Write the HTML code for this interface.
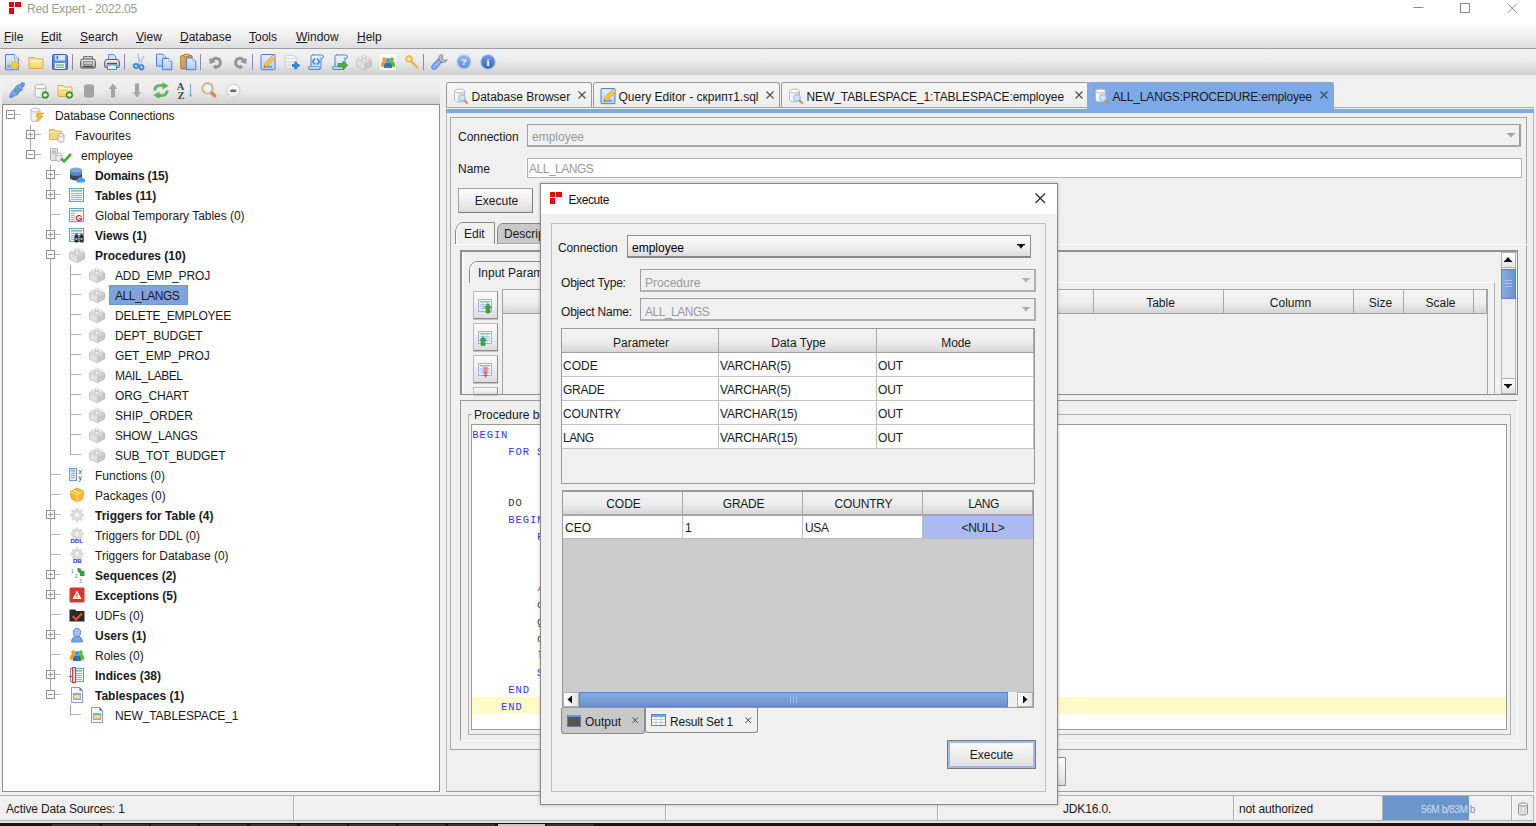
<!DOCTYPE html>
<html><head><meta charset="utf-8"><title>Red Expert - 2022.05</title>
<style>
*{box-sizing:border-box;margin:0;padding:0}
html,body{width:1536px;height:826px;overflow:hidden}
body{position:relative;background:#f0f0f0;font-family:"Liberation Sans",sans-serif;font-size:12px;color:#1a1a1a}
.abs{position:absolute}
.t{position:absolute;white-space:nowrap;line-height:14px;height:14px}
.b{font-weight:bold}
.g{color:#9a9a9a}
u{text-decoration:underline;text-underline-offset:1px}
.hdr{position:absolute;overflow:hidden;background:linear-gradient(#f3f3f3,#eeeeee 55%,#d6d6d6);border-right:1px solid #a8a8a8;border-bottom:1px solid #a0a0a0;text-align:center;line-height:21px;white-space:nowrap}
.cell{position:absolute;background:#fff;border-right:1px solid #c8c8c8;border-bottom:1px solid #c8c8c8;line-height:23px;padding-left:2px;white-space:nowrap}
.btn{position:absolute;border:1px solid #8e8e8e;background:linear-gradient(#fcfcfc,#ededed 55%,#dcdcdc);text-align:center;white-space:nowrap}
.mono{font-family:"Liberation Mono",monospace;font-size:10.5px;letter-spacing:0.9px;color:#2b2be8;position:absolute;white-space:pre;line-height:14px}
</style></head><body>

<div class="abs" style="left:0;top:0;width:1536px;height:23px;background:#fff"></div>
<svg class="abs" style="left:9px;top:2px" width="12" height="12"><rect x="0" y="0" width="5" height="5" fill="#e8000a"/><rect x="6" y="0" width="6" height="5" fill="#e8000a"/><rect x="0" y="6" width="5" height="6" fill="#e8000a"/></svg>
<div class="t" style="left:27px;top:2px;color:#9b9b9b;font-size:12px;letter-spacing:-0.2px">Red Expert - 2022.05</div>
<svg class="abs" style="left:1405px;top:0" width="131" height="20" fill="none" stroke="#8c8c8c" stroke-width="1">
<path d="M8.5 7.5H18.5"/><rect x="55.500" y="3.500" width="9" height="9"/><path d="M102.500 3.500L112 13M112 3.500L102.500 13"/></svg>
<div class="abs" style="left:0;top:23px;width:1536px;height:26px;background:linear-gradient(#ffffff,#f2f2f2 40%,#dedede);border-bottom:1px solid #9c9c9c"></div>
<div class="t" style="left:4px;top:30px"><u>F</u>ile</div>
<div class="t" style="left:41px;top:30px"><u>E</u>dit</div>
<div class="t" style="left:80px;top:30px"><u>S</u>earch</div>
<div class="t" style="left:136px;top:30px"><u>V</u>iew</div>
<div class="t" style="left:180px;top:30px"><u>D</u>atabase</div>
<div class="t" style="left:249px;top:30px"><u>T</u>ools</div>
<div class="t" style="left:296px;top:30px"><u>W</u>indow</div>
<div class="t" style="left:357px;top:30px"><u>H</u>elp</div>
<div class="abs" style="left:0;top:49px;width:1536px;height:26px;background:linear-gradient(#f2f2f2,#ebebeb 50%,#cecece)"></div>
<svg class="abs" style="left:4px;top:54px;overflow:visible" width="16" height="16" viewBox="0 0 16 16"><linearGradient id="gnew" x1="0" y1="0" x2="0" y2="1"><stop offset="0" stop-color="#e6f0fd"/><stop offset="1" stop-color="#a9c8f4"/></linearGradient><path d="M1.5 0.5H10.5L14.5 4.5V15.7H1.5Z" fill="url(#gnew)" stroke="#4a80d8" stroke-width="1"/><path d="M10.5 0.5V4.5H14.5" fill="#f6faff" stroke="#6a9ae4" stroke-width=".7"/><rect x="3.200" y="10.800" width="4" height="2.600" fill="#6fb0f6"/><path d="M11 5.500L12 8.200L14.800 7.200L13.900 9.800L16 11L13.800 12L14.500 14.800L12 13.600L10.800 16L9.700 13.500L7 14.200L8 11.800L6 10.300L8.500 9.600L8 7L10.200 8.200Z" fill="#f9cb32" stroke="#f0a820" stroke-width=".4"/></svg>
<svg class="abs" style="left:28px;top:54px;overflow:visible" width="16" height="16" viewBox="0 0 16 16"><linearGradient id="gopen" x1="0" y1="0" x2="0" y2="1"><stop offset="0" stop-color="#fef6cc"/><stop offset="1" stop-color="#f6d058"/></linearGradient><path d="M1 3.500H6.500L7.500 5H15V14.500H1Z" fill="url(#gopen)" stroke="#e6a23c" stroke-width="1"/><path d="M2 6.500H14" stroke="#fff6cf" stroke-width="1"/><path d="M1.500 5.200H7" stroke="#eeb85a" stroke-width=".8"/></svg>
<svg class="abs" style="left:52px;top:54px;overflow:visible" width="16" height="16" viewBox="0 0 16 16"><linearGradient id="gsave" x1="0" y1="0" x2="0" y2="1"><stop offset="0" stop-color="#6f9ae6"/><stop offset="1" stop-color="#4a78d2"/></linearGradient><path d="M.5 1.500Q.5 .5 1.500 .5H14L15.500 2V14.500Q15.500 15.500 14.500 15.500H1.500Q.5 15.500 .5 14.500Z" fill="url(#gsave)" stroke="#3560c0" stroke-width="1"/><rect x="3" y="1" width="10" height="5.500" fill="#dbe6fa"/><rect x="4.500" y="1.800" width="1.600" height="3.500" fill="#4a72c8"/><rect x="2.800" y="9" width="10.400" height="6" fill="#f6f8fc"/><rect x="4" y="10.300" width="8" height="1.500" fill="#7cc568"/><rect x="4" y="12.600" width="8" height="1.500" fill="#7cc568"/></svg>
<svg class="abs" style="left:80px;top:54px;overflow:visible" width="16" height="16" viewBox="0 0 16 16"><linearGradient id="gprint" x1="0" y1="0" x2="0" y2="1"><stop offset="0" stop-color="#f2f2f2"/><stop offset="1" stop-color="#a8a8a8"/></linearGradient><path d="M3.500 5.500V2.500H12.500V5.500" fill="#d6d6d6" stroke="#6e6e6e" stroke-width=".9"/><path d="M.7 7.500Q.7 5 3 5H13Q15.300 5 15.300 7.500V13Q15.300 14 14.300 14H1.700Q.7 14 .7 13Z" fill="url(#gprint)" stroke="#4e4e4e" stroke-width="1"/><rect x="3.500" y="7.500" width="9" height="3" fill="#c4c4c4" stroke="#707070" stroke-width=".6"/><path d="M3 12.500H13" stroke="#4a4a4a" stroke-width="1.400"/></svg>
<svg class="abs" style="left:104px;top:54px;overflow:visible" width="16" height="16" viewBox="0 0 16 16"><linearGradient id="gprev" x1="0" y1="0" x2="0" y2="1"><stop offset="0" stop-color="#f4f4f4"/><stop offset="1" stop-color="#b4b4b4"/></linearGradient><path d="M4.500 6V.5H9.500L12 3V6" fill="#cfe1fb" stroke="#4a80d8" stroke-width=".9"/><path d="M.7 8Q.7 5.500 3 5.500H13Q15.300 5.500 15.300 8V12.500Q15.300 13.500 14.300 13.500H1.700Q.7 13.500 .7 12.500Z" fill="url(#gprev)" stroke="#5a5a5a" stroke-width="1"/><path d="M3 9.500H13" stroke="#555" stroke-width="1.300"/><rect x="3.500" y="11" width="9" height="4.500" fill="#e4eefc" stroke="#4a80d8" stroke-width=".9"/></svg>
<svg class="abs" style="left:132px;top:54px;overflow:visible" width="16" height="16" viewBox="0 0 16 16"><path d="M6 0L8.800 10L7 10.500Z" fill="#c4d6ee" stroke="#8fb0dc" stroke-width=".5"/><path d="M12 2L8.500 11L6.500 10Z" fill="#dde8f6" stroke="#8fb0dc" stroke-width=".5"/><ellipse cx="4" cy="12" rx="2.300" ry="2" fill="none" stroke="#3f86d8" stroke-width="1.800"/><ellipse cx="9.500" cy="13.300" rx="2" ry="2.200" fill="none" stroke="#3f86d8" stroke-width="1.800"/></svg>
<svg class="abs" style="left:156px;top:54px;overflow:visible" width="16" height="16" viewBox="0 0 16 16"><linearGradient id="gcp1" x1="0" y1="0" x2="0" y2="1"><stop offset="0" stop-color="#e6f0fd"/><stop offset="1" stop-color="#a9c8f4"/></linearGradient><path d="M0.5 0.2H7.0L10.0 3.2V12.2H0.5Z" fill="url(#gcp1)" stroke="#4a80d8" stroke-width="1"/><path d="M7.0 0.2V3.2H10.0" fill="#f6faff" stroke="#6a9ae4" stroke-width=".7"/><linearGradient id="gcp2" x1="0" y1="0" x2="0" y2="1"><stop offset="0" stop-color="#e6f0fd"/><stop offset="1" stop-color="#a9c8f4"/></linearGradient><path d="M6.5 4.5H12.8L15.8 7.5V15.7H6.5Z" fill="url(#gcp2)" stroke="#4a80d8" stroke-width="1"/><path d="M12.8 4.5V7.5H15.8" fill="#f6faff" stroke="#6a9ae4" stroke-width=".7"/></svg>
<svg class="abs" style="left:180px;top:54px;overflow:visible" width="16" height="16" viewBox="0 0 16 16"><linearGradient id="gpst" x1="0" y1="0" x2="1" y2="1"><stop offset="0" stop-color="#e8b564"/><stop offset="1" stop-color="#c47f2c"/></linearGradient><rect x=".7" y="1.500" width="11.500" height="13.500" rx="1.200" fill="url(#gpst)" stroke="#b06f22" stroke-width=".9"/><rect x="3.800" y=".3" width="5.400" height="2.600" rx=".8" fill="#e2c070" stroke="#9a5f1c" stroke-width=".7"/><linearGradient id="gpst2" x1="0" y1="0" x2="0" y2="1"><stop offset="0" stop-color="#e6f0fd"/><stop offset="1" stop-color="#a9c8f4"/></linearGradient><path d="M6.5 4H12.8L15.8 7V15.7H6.5Z" fill="url(#gpst2)" stroke="#4a80d8" stroke-width="1"/><path d="M12.8 4V7H15.8" fill="#f6faff" stroke="#6a9ae4" stroke-width=".7"/></svg>
<svg class="abs" style="left:208px;top:54px;overflow:visible" width="16" height="16" viewBox="0 0 16 16"><g ><path d="M5.800 12.200A4.300 4.300 0 1 0 4.200 6.800" fill="none" stroke="#979797" stroke-width="3.200"/><path d="M1.200 3.800L1.800 10.300L7.800 7.700Z" fill="#979797"/><path d="M6.500 12L8 15.800L10 12.500Z" fill="#979797"/></g></svg>
<svg class="abs" style="left:232px;top:54px;overflow:visible" width="16" height="16" viewBox="0 0 16 16"><g transform="translate(16,0) scale(-1,1)"><path d="M5.800 12.200A4.300 4.300 0 1 0 4.200 6.800" fill="none" stroke="#979797" stroke-width="3.200"/><path d="M1.200 3.800L1.800 10.300L7.800 7.700Z" fill="#979797"/><path d="M6.500 12L8 15.800L10 12.500Z" fill="#979797"/></g></svg>
<svg class="abs" style="left:260px;top:54px;overflow:visible" width="16" height="16" viewBox="0 0 16 16"><linearGradient id="gedit" x1="0" y1="0" x2="0" y2="1"><stop offset="0" stop-color="#e4effd"/><stop offset="1" stop-color="#b4d0f6"/></linearGradient><rect x="1" y=".5" width="14" height="15.200" rx=".8" fill="url(#gedit)" stroke="#4a80d8" stroke-width="1"/><rect x="5" y="11.800" width="7" height="2" fill="#5aa6f4"/><path d="M12.800 1.200L15.500 3.800L7.500 12.200L3.800 13.400L4.800 9.600Z" fill="#f6c544" stroke="#d8922c" stroke-width=".7"/><path d="M12.800 1.200L15.500 3.800L14.300 5L11.600 2.400Z" fill="#f4ddc8" stroke="#d8922c" stroke-width=".5"/><path d="M3.800 13.400L4.300 11.500L5.800 12.800Z" fill="#8a5a2a"/></svg>
<svg class="abs" style="left:284px;top:54px;overflow:visible" width="16" height="16" viewBox="0 0 16 16"><linearGradient id="gdba" x1="0" y1="0" x2="0" y2="1"><stop offset="0" stop-color="#ffffff"/><stop offset="1" stop-color="#e2e2e2"/></linearGradient><path d="M1 3V13.500A5.500 1.600 0 0 0 12 13.500V3" fill="url(#gdba)" stroke="#c8c8c8" stroke-width=".8"/><ellipse cx="6.500" cy="3" rx="5.500" ry="1.600" fill="#fafafa" stroke="#c8c8c8" stroke-width=".8"/><path d="M1 6.500A5.500 1.600 0 0 0 12 6.500M1 10A5.500 1.600 0 0 0 12 10" fill="none" stroke="#d0d0d0" stroke-width=".8"/><path d="M8 11.500H15.500M11.800 7.800V15.200" stroke="#2e8ad8" stroke-width="3"/></svg>
<svg class="abs" style="left:308px;top:54px;overflow:visible" width="16" height="16" viewBox="0 0 16 16"><linearGradient id="gscr" x1="0" y1="0" x2="0" y2="1"><stop offset="0" stop-color="#eef5fe"/><stop offset="1" stop-color="#bcd6f8"/></linearGradient><path d="M4 1H13.500Q15.500 1 15.500 3Q15.500 4.500 13.500 4.500H13V13.500Q13 15.500 11 15.500H2Q.5 15.500 .5 14Q.5 12.500 2 12.500H3V2.500Q3 1 4.500 1Z" fill="url(#gscr)" stroke="#4a86e0" stroke-width="1"/><path d="M13 4.500Q12 4.500 12 3" fill="none" stroke="#4a86e0" stroke-width=".7"/><path d="M3 12.500H11Q12 13 11.500 15" fill="none" stroke="#4a86e0" stroke-width=".7"/><path d="M7 4.500L4.500 7.500L7 10.500M9 4.500L11.500 7.500L9 10.500" fill="none" stroke="#4a8ae6" stroke-width="1.800"/></svg>
<svg class="abs" style="left:332px;top:54px;overflow:visible" width="16" height="16" viewBox="0 0 16 16"><linearGradient id="gscx" x1="0" y1="0" x2="0" y2="1"><stop offset="0" stop-color="#eef5fe"/><stop offset="1" stop-color="#bcd6f8"/></linearGradient><path d="M4 1H13.500Q15.500 1 15.500 3Q15.500 4.500 13.500 4.500H13V13.500Q13 15.500 11 15.500H2Q.5 15.500 .5 14Q.5 12.500 2 12.500H3V2.500Q3 1 4.500 1Z" fill="url(#gscx)" stroke="#4a86e0" stroke-width="1"/><path d="M13 4.500Q12 4.500 12 3" fill="none" stroke="#4a86e0" stroke-width=".7"/><path d="M3 12.500H11Q12 13 11.500 15" fill="none" stroke="#4a86e0" stroke-width=".7"/><path d="M6 9.500H11V7.200L15.800 11.200L11 15.200V13H6Z" fill="#58a83a" stroke="#3f8a28" stroke-width=".7"/></svg>
<svg class="abs" style="left:356px;top:54px;overflow:visible" width="16" height="16" viewBox="0 0 16 16"><path d="M.6 6L8 2.500L15.400 6V11.800L8 15.500L.6 11.800Z" fill="#dedede" stroke="#a6a6a6" stroke-width=".9"/><path d="M8 9.500L15.400 6V11.800L8 15.500Z" fill="#c9c9c9"/><path d="M.6 6L8 9.500V15.500L.6 11.800Z" fill="#e0e0e0"/><path d="M.6 6L8 2.500L15.400 6L8 9.500Z" fill="#eeeeee"/><path d="M.6 6L8 9.500L15.400 6" fill="none" stroke="#cfcfcf" stroke-width=".6"/><path d="M5.9 2.2V3.7A2.100 1.100 0 0 0 10.1 3.7V2.2" fill="#e4e4e4" stroke="#b4b4b4" stroke-width=".5"/><ellipse cx="8" cy="2.2" rx="2.100" ry="1.100" fill="#fbfbfb" stroke="#b8b8b8" stroke-width=".5"/><path d="M2.1999999999999997 4V5.5A2.100 1.100 0 0 0 6.4 5.5V4" fill="#e4e4e4" stroke="#b4b4b4" stroke-width=".5"/><ellipse cx="4.3" cy="4" rx="2.100" ry="1.100" fill="#fbfbfb" stroke="#b8b8b8" stroke-width=".5"/><path d="M9.6 4V5.5A2.100 1.100 0 0 0 13.799999999999999 5.5V4" fill="#e4e4e4" stroke="#b4b4b4" stroke-width=".5"/><ellipse cx="11.7" cy="4" rx="2.100" ry="1.100" fill="#fbfbfb" stroke="#b8b8b8" stroke-width=".5"/><path d="M5.9 5.9V7.4A2.100 1.100 0 0 0 10.1 7.4V5.9" fill="#e4e4e4" stroke="#b4b4b4" stroke-width=".5"/><ellipse cx="8" cy="5.9" rx="2.100" ry="1.100" fill="#fbfbfb" stroke="#b8b8b8" stroke-width=".5"/></svg>
<svg class="abs" style="left:380px;top:54px;overflow:visible" width="16" height="16" viewBox="0 0 16 16"><rect x="0" y="0" width="16" height="16" fill="#fff"/><circle cx="4.2" cy="5.2" r="1.9" fill="#f59a23"/><path d="M0.7000000000000002 12.8Q0.7000000000000002 6.8 4.2 6.8Q7.7 6.8 7.7 12.8Z" fill="#f59a23"/><circle cx="11.8" cy="5.2" r="1.9" fill="#5cbf2a"/><path d="M8.3 12.8Q8.3 6.8 11.8 6.8Q15.3 6.8 15.3 12.8Z" fill="#5cbf2a"/><circle cx="8" cy="6.200" r="2.200" fill="#3f95e6"/><path d="M3.800 14Q3.800 8.600 8 8.600Q12.200 8.600 12.200 14Z" fill="#2a74b4"/><path d="M1 14.300H15" stroke="#d6dccc" stroke-width=".6"/></svg>
<svg class="abs" style="left:404px;top:54px;overflow:visible" width="16" height="16" viewBox="0 0 16 16"><circle cx="5" cy="5" r="2.800" fill="#fdeec8" stroke="#f5b450" stroke-width="1.900"/><path d="M7 7L13 13.300" stroke="#f3aa40" stroke-width="2.100" stroke-linecap="round"/><path d="M10 10.800L11.500 9.400" stroke="#f3aa40" stroke-width="1.300"/></svg>
<svg class="abs" style="left:431px;top:54px;overflow:visible" width="16" height="16" viewBox="0 0 16 16"><path d="M3.200 13L8.600 7" stroke="#6496ea" stroke-width="6" stroke-linecap="round"/><path d="M3.200 13L8.600 7" stroke="#94b8f4" stroke-width="2.600" stroke-linecap="round"/><path d="M8.500 7.500L11 5" stroke="#9c9c9c" stroke-width="3"/><path d="M10.200 .4A3.900 3.900 0 0 0 8.600 6.300L10.600 8A3.900 3.900 0 0 0 16.200 5.700L13.300 6.300L11.400 4.500L12 1.500Z" fill="#bababa" stroke="#7a7a7a" stroke-width=".7"/></svg>
<svg class="abs" style="left:456px;top:54px;overflow:visible" width="16" height="16" viewBox="0 0 16 16"><linearGradient id="ghelp" x1="0" y1="0" x2="0" y2="1"><stop offset="0" stop-color="#98b8ee"/><stop offset="1" stop-color="#5685d6"/></linearGradient><circle cx="8" cy="8" r="7" fill="url(#ghelp)" stroke="#b8ccf2" stroke-width="1.300"/><circle cx="8" cy="8" r="5.400" fill="none" stroke="#86aae6" stroke-width=".8"/><text x="8" y="11.400" text-anchor="middle" font-family="Liberation Sans,sans-serif" font-weight="bold" font-size="9.500" fill="#fff">?</text></svg>
<svg class="abs" style="left:480px;top:54px;overflow:visible" width="16" height="16" viewBox="0 0 16 16"><linearGradient id="ginfo" x1="0" y1="0" x2="0" y2="1"><stop offset="0" stop-color="#6f98dc"/><stop offset="1" stop-color="#3566bc"/></linearGradient><circle cx="8" cy="8" r="7" fill="url(#ginfo)" stroke="#86a8e2" stroke-width="1.200"/><text x="8" y="11.800" text-anchor="middle" font-family="Liberation Serif,serif" font-weight="bold" font-size="10.500" fill="#fff">i</text></svg>
<div class="abs" style="left:72px;top:54px;width:1px;height:16px;background:#8a8ab8"></div>
<div class="abs" style="left:124px;top:54px;width:1px;height:16px;background:#8a8ab8"></div>
<div class="abs" style="left:200px;top:54px;width:1px;height:16px;background:#8a8ab8"></div>
<div class="abs" style="left:252px;top:54px;width:1px;height:16px;background:#8a8ab8"></div>
<div class="abs" style="left:423px;top:54px;width:1px;height:16px;background:#8a8ab8"></div>
<div class="abs" style="left:2px;top:76px;width:438px;height:28px;background:linear-gradient(#f1f1f1,#ececec 50%,#d2d2d2)"></div>
<div class="abs" style="left:2px;top:104px;width:438px;height:688px;background:#fff;border:1px solid #8e8e8e"></div>
<div class="abs" style="left:446px;top:107px;width:1088px;height:1px;background:#a8a8a8"></div>
<div class="abs" style="left:446px;top:82px;width:146px;height:26px;background:linear-gradient(#f6f6f6,#eeeeee);border:1px solid #9a9a9a;border-bottom:1px solid #a4a4a4;border-radius:3px 3px 0 0"></div>
<div class="t" style="left:471.5px;top:90px;">Database Browser</div>
<svg class="abs" style="left:452.5px;top:88px;overflow:visible" width="16" height="16" viewBox="0 0 16 16"><linearGradient id="gtdb" x1="0" y1="0" x2="1" y2="0"><stop offset="0" stop-color="#ffffff"/><stop offset="1" stop-color="#dcdcdc"/></linearGradient><path d="M1.500 3V12A5 2 0 0 0 11.500 12V3" fill="url(#gtdb)" stroke="#b2b2b2" stroke-width=".9"/><ellipse cx="6.500" cy="3" rx="5" ry="2" fill="#fdfdfd" stroke="#b2b2b2" stroke-width=".9"/><circle cx="9" cy="10" r="3.200" fill="#d4e5fb" stroke="#94baf0" stroke-width="1.100"/><path d="M11.500 12.500L14 15" stroke="#d98a3a" stroke-width="2" stroke-linecap="round"/></svg>
<svg class="abs" style="left:578px;top:91px" width="9" height="9" stroke="#4a4a4a" stroke-width="1.1" fill="none"><path d="M0.500 0.500L7.500 7.500M7.500 0.500L0.500 7.500"/></svg>
<div class="abs" style="left:593px;top:82px;width:187px;height:26px;background:linear-gradient(#f6f6f6,#eeeeee);border:1px solid #9a9a9a;border-bottom:1px solid #a4a4a4;border-radius:3px 3px 0 0"></div>
<div class="t" style="left:618.5px;top:90px;">Query Editor - скрипт1.sql</div>
<svg class="abs" style="left:599.5px;top:88px;overflow:visible" width="16" height="16" viewBox="0 0 16 16"><linearGradient id="gedit" x1="0" y1="0" x2="0" y2="1"><stop offset="0" stop-color="#e4effd"/><stop offset="1" stop-color="#b4d0f6"/></linearGradient><rect x="1" y=".5" width="14" height="15.200" rx=".8" fill="url(#gedit)" stroke="#4a80d8" stroke-width="1"/><rect x="5" y="11.800" width="7" height="2" fill="#5aa6f4"/><path d="M12.800 1.200L15.500 3.800L7.500 12.200L3.800 13.400L4.800 9.600Z" fill="#f6c544" stroke="#d8922c" stroke-width=".7"/><path d="M12.800 1.200L15.500 3.800L14.300 5L11.600 2.400Z" fill="#f4ddc8" stroke="#d8922c" stroke-width=".5"/><path d="M3.800 13.400L4.300 11.500L5.800 12.800Z" fill="#8a5a2a"/></svg>
<svg class="abs" style="left:766px;top:91px" width="9" height="9" stroke="#4a4a4a" stroke-width="1.1" fill="none"><path d="M0.500 0.500L7.500 7.500M7.500 0.500L0.500 7.500"/></svg>
<div class="abs" style="left:781px;top:82px;width:308px;height:26px;background:linear-gradient(#f6f6f6,#eeeeee);border:1px solid #9a9a9a;border-bottom:1px solid #a4a4a4;border-radius:3px 3px 0 0"></div>
<div class="t" style="left:806.5px;top:90px;letter-spacing:-0.085px;">NEW_TABLESPACE_1:TABLESPACE:employee</div>
<svg class="abs" style="left:787.5px;top:88px;overflow:visible" width="16" height="16" viewBox="0 0 16 16"><linearGradient id="gtdb" x1="0" y1="0" x2="1" y2="0"><stop offset="0" stop-color="#ffffff"/><stop offset="1" stop-color="#dcdcdc"/></linearGradient><path d="M1.500 3V12A5 2 0 0 0 11.500 12V3" fill="url(#gtdb)" stroke="#b2b2b2" stroke-width=".9"/><ellipse cx="6.500" cy="3" rx="5" ry="2" fill="#fdfdfd" stroke="#b2b2b2" stroke-width=".9"/><circle cx="9" cy="10" r="3.200" fill="#d4e5fb" stroke="#94baf0" stroke-width="1.100"/><path d="M11.500 12.500L14 15" stroke="#d98a3a" stroke-width="2" stroke-linecap="round"/></svg>
<svg class="abs" style="left:1075px;top:91px" width="9" height="9" stroke="#4a4a4a" stroke-width="1.1" fill="none"><path d="M0.500 0.500L7.500 7.500M7.500 0.500L0.500 7.500"/></svg>
<div class="abs" style="left:1087px;top:82px;width:247px;height:27px;background:#7da9e8;border:1px solid #98a4b8;border-bottom:none;border-radius:3px 3px 0 0"></div>
<div class="t" style="left:1112.5px;top:90px;letter-spacing:-0.170px;">ALL_LANGS:PROCEDURE:employee</div>
<svg class="abs" style="left:1093.5px;top:88px;overflow:visible" width="16" height="16" viewBox="0 0 16 16"><linearGradient id="gtdb" x1="0" y1="0" x2="1" y2="0"><stop offset="0" stop-color="#ffffff"/><stop offset="1" stop-color="#dcdcdc"/></linearGradient><path d="M1.500 3V12A5 2 0 0 0 11.500 12V3" fill="url(#gtdb)" stroke="#b2b2b2" stroke-width=".9"/><ellipse cx="6.500" cy="3" rx="5" ry="2" fill="#fdfdfd" stroke="#b2b2b2" stroke-width=".9"/><circle cx="9" cy="10" r="3.200" fill="#d4e5fb" stroke="#94baf0" stroke-width="1.100"/><path d="M11.500 12.500L14 15" stroke="#d98a3a" stroke-width="2" stroke-linecap="round"/></svg>
<svg class="abs" style="left:1320px;top:91px" width="9" height="9" stroke="#3a4a60" stroke-width="1.1" fill="none"><path d="M0.500 0.500L7.500 7.500M7.500 0.500L0.500 7.500"/></svg>
<div class="abs" style="left:446px;top:109px;width:1088px;height:4px;background:#7da9e8"></div>
<div class="abs" style="left:446px;top:113px;width:1088px;height:679px;border:1px solid #b9b9b9;border-top:none;border-bottom-color:#9c9c9c"></div>
<div class="abs" style="left:450px;top:117px;width:1077px;height:633px;border:1px solid #a6a6a6"></div>
<div class="t" style="left:458px;top:130px">Connection</div>
<div class="abs" style="left:527px;top:124px;width:994px;height:23px;border:1px solid #9e9e9e;border-right:2px solid #9a9a9a;border-bottom:2px solid #a8a8a8;background:#f0f0f0"></div>
<div class="t g" style="left:532px;top:130px">employee</div>
<svg class="abs" style="left:1507px;top:133px" width="8" height="5" viewBox="0 0 9 5.500" preserveAspectRatio="none"><path d="M0 0H9V1.300H0ZM1.500 1.300H7.500L4.500 5.200Z" fill="#a0a0a0"/></svg>
<div class="t" style="left:458px;top:162px">Name</div>
<div class="abs" style="left:527px;top:158px;width:995px;height:20px;border:1px solid #b4b4b4;background:#fff"></div>
<div class="t g" style="left:529px;top:162px;letter-spacing:-0.479px;">ALL_LANGS</div>
<div class="btn" style="left:458px;top:188px;width:75px;height:25px;line-height:25px;padding-left:2px;border-color:#a2a2a2 #7c7c7c #7c7c7c #a2a2a2">Execute</div>
<svg class="abs" style="left:450px;top:218px" width="140" height="28"><path d="M47.500 26V12Q48.500 5.500 53 5.500H126.500V26Z" fill="#c9c9c9" stroke="#8a8a8a" stroke-width="1"/><path d="M5.500 26V14Q6.500 5.500 12 4.500H44.500V26" fill="#f0f0f0" stroke="#8a8a8a" stroke-width="1"/><path d="M6.500 26V14Q7.500 6.500 12 5.500" fill="none" stroke="#fff" stroke-width="1"/></svg>
<div class="t" style="left:504px;top:227px;">Description</div>
<div class="t" style="left:464px;top:227px;">Edit</div>
<div class="abs" style="left:453px;top:244px;width:1074px;height:1px;background:#fff"></div>
<div class="abs" style="left:460px;top:250px;width:1058px;height:145px;border:1px solid #8c8c8c;border-top:2px solid #929292;border-left:2px solid #8e8e8e"></div>
<div class="abs" style="left:462px;top:252px;width:2px;height:142px;background:#fafafa"></div>
<svg class="abs" style="left:466px;top:258px" width="100" height="26"><path d="M3.500 25V12Q4.500 4.500 10 3.500H93.500V25" fill="#f0f0f0" stroke="#8a8a8a" stroke-width="1"/><path d="M4.500 25V12Q5.500 5.500 10 4.500" fill="none" stroke="#fff" stroke-width="1"/></svg>
<div class="t" style="left:478px;top:266px">Input Parameters</div>
<div class="abs" style="left:561px;top:282px;width:934px;height:112px;border-right:1px solid #b0b0b0;border-top:1px solid #fff"></div>
<div class="btn" style="left:473px;top:291px;width:25px;height:28px;border-color:#bcbcbc #8e8e8e #8e8e8e #bcbcbc;box-shadow:0 1px 0 #c4c4c4"></div>
<svg class="abs" style="left:478px;top:298px;overflow:visible" width="16" height="16" viewBox="0 0 16 16"><rect x=".5" y="1.500" width="13" height="12" fill="#f2f6fd" stroke="#94b6ea"/><rect x="2" y="3" width="10" height="1.500" fill="#8ccf7a"/><path d="M2 6.500H12M2 8.500H12M2 10.500H12M5 5V13M9 5V13" stroke="#a9c4ee" stroke-width=".9"/><path d="M10 5.500L13.500 9.500H12V15H8V9.500H6.500Z" fill="#3fa53f" stroke="#2b8a2b" stroke-width=".5"/></svg>
<div class="btn" style="left:473px;top:323px;width:25px;height:28px;border-color:#bcbcbc #8e8e8e #8e8e8e #bcbcbc;box-shadow:0 1px 0 #c4c4c4"></div>
<svg class="abs" style="left:478px;top:330px;overflow:visible" width="16" height="16" viewBox="0 0 16 16"><rect x=".5" y="1.500" width="13" height="12" fill="#f2f6fd" stroke="#94b6ea"/><rect x="2" y="3" width="10" height="1.500" fill="#8ccf7a"/><path d="M2 6.500H12M2 8.500H12M2 10.500H12M5 5V13M9 5V13" stroke="#a9c4ee" stroke-width=".9"/><path d="M5 6.500L8.500 10.500H7V15.500H3V10.500H1.500Z" fill="#3fa53f" stroke="#2b8a2b" stroke-width=".5"/></svg>
<div class="btn" style="left:473px;top:355px;width:25px;height:28px;border-color:#bcbcbc #8e8e8e #8e8e8e #bcbcbc;box-shadow:0 1px 0 #c4c4c4"></div>
<svg class="abs" style="left:478px;top:362px;overflow:visible" width="16" height="16" viewBox="0 0 16 16"><rect x=".5" y="1.500" width="13" height="12" fill="#f2f6fd" stroke="#94b6ea"/><rect x="2" y="3" width="10" height="1.500" fill="#8ccf7a"/><path d="M2 6.500H12M2 8.500H12M2 10.500H12M5 5V13M9 5V13" stroke="#a9c4ee" stroke-width=".9"/><rect x="5.500" y="5" width="4" height="7" fill="#f28a8a"/><path d="M7.500 10V15.500M5.500 13.500H9.500" stroke="#e63a3a" stroke-width="1.200"/></svg>
<div class="btn" style="left:473px;top:387px;width:25px;height:8px;border-color:#bcbcbc #8e8e8e #8e8e8e #bcbcbc;box-shadow:0 1px 0 #c4c4c4"></div>
<div class="abs" style="left:502px;top:289px;width:986px;height:105px;border:1px solid #a4a4a4;border-bottom:none;background:#f0f0f0"></div>
<div class="hdr" style="left:503px;top:290px;width:591px;height:24px;line-height:27px;padding-left:4px"></div>
<div class="hdr" style="left:1094px;top:290px;width:130px;height:24px;line-height:27px;padding-left:4px">Table</div>
<div class="hdr" style="left:1224px;top:290px;width:130px;height:24px;line-height:27px;padding-left:4px">Column</div>
<div class="hdr" style="left:1354px;top:290px;width:50px;height:24px;line-height:27px;padding-left:4px">Size</div>
<div class="hdr" style="left:1404px;top:290px;width:70px;height:24px;line-height:27px;padding-left:4px">Scale</div>
<div class="hdr" style="left:1474px;top:290px;width:13px;height:24px;line-height:27px;padding-left:4px"></div>
<div class="abs" style="left:1501px;top:252px;width:15px;height:142px;background:#f0f0f0;border-left:1px solid #b8b8b8;border-right:1px solid #b8b8b8"></div>
<div class="abs" style="left:1501px;top:252px;width:15px;height:16px;background:linear-gradient(#fff,#e4e4e4);border:1px solid #b0b0b0"></div>
<svg class="abs" style="left:1504px;top:257px" width="8" height="5" viewBox="0 .5 9 5.500" preserveAspectRatio="none"><path d="M0 6H9V4.500H0ZM1 4.500H8L4.500 .5Z" fill="#111"/></svg>
<div class="abs" style="left:1501px;top:269px;width:15px;height:30px;background:linear-gradient(90deg,#87a9de,#6a93d2);border:1px solid #5f86c4"></div>
<svg class="abs" style="left:1505px;top:280px" width="7" height="8"><path d="M0 0.500H7M0 3.500H7M0 6.500H7" stroke="#b8c2ee" stroke-width="1"/></svg>
<div class="abs" style="left:1501px;top:378px;width:15px;height:16px;background:linear-gradient(#fff,#e4e4e4);border:1px solid #b0b0b0"></div>
<svg class="abs" style="left:1504px;top:384px" width="8" height="5" viewBox="0 0 9 5.500" preserveAspectRatio="none"><path d="M0 0H9V1.300H0ZM1.500 1.300H7.500L4.500 5.200Z" fill="#111"/></svg>
<div class="abs" style="left:460px;top:400px;width:1058px;height:341px;border:1px solid;border-color:#9a9a9a #fbfbfb #fbfbfb #9a9a9a"></div>
<div class="abs" style="left:468px;top:414px;width:1043px;height:321px;border:1px solid #b0b0b0"></div>
<div class="t" style="left:472px;top:408px;background:#f0f0f0;padding:0 2px">Procedure body</div>
<div class="abs" style="left:471px;top:424px;width:1036px;height:306px;background:#fff;border:1px solid #9a9a9a"></div>
<div class="abs" style="left:472px;top:697px;width:1034px;height:17px;background:#fffbc8"></div>
<div class="mono" style="left:472.3px;top:428px;color:#333"><span style="color:#3434ff">BEGIN</span></div>
<div class="mono" style="left:508.3px;top:445px;color:#333"><span style="color:#3434ff">FOR SELECT</span> job_code, job_grade, job_country <span style="color:#3434ff">FROM</span> job</div>
<div class="mono" style="left:544.3px;top:462px;color:#333"><span style="color:#3434ff">INTO</span> :code, :grade, :country</div>
<div class="mono" style="left:508.3px;top:496px;color:#333">DO</div>
<div class="mono" style="left:508.3px;top:513px;color:#333"><span style="color:#3434ff">BEGIN</span></div>
<div class="mono" style="left:537.1px;top:530px;color:#333"><span style="color:#3434ff">FOR SELECT</span> languages <span style="color:#3434ff">FROM</span> show_langs</div>
<div class="mono" style="left:565.9px;top:547px;color:#333">(:code, :grade, :country) <span style="color:#3434ff">INTO</span> :lang DO</div>
<div class="mono" style="left:565.9px;top:564px;color:#333"><span style="color:#3434ff">SUSPEND</span>;</div>
<div class="mono" style="left:537.1px;top:581px;color:#333"><span style="color:#555">/* Put nice separators between rows */</span></div>
<div class="mono" style="left:537.1px;top:598px;color:#333">code = <span style="color:#b04a4a">'====='</span>;</div>
<div class="mono" style="left:537.1px;top:615px;color:#333">grade = <span style="color:#b04a4a">'====='</span>;</div>
<div class="mono" style="left:537.1px;top:632px;color:#333">country = <span style="color:#b04a4a">'==============='</span>;</div>
<div class="mono" style="left:537.1px;top:649px;color:#333">lang = <span style="color:#b04a4a">'=============='</span>;</div>
<div class="mono" style="left:537.1px;top:666px;color:#333"><span style="color:#3434ff">SUSPEND</span>;</div>
<div class="mono" style="left:508.3px;top:683px;color:#333"><span style="color:#3434ff">END</span></div>
<div class="mono" style="left:501.1px;top:700px;color:#333"><span style="color:#3434ff">END</span></div>
<div class="btn" style="left:990px;top:757px;width:76px;height:29px"></div>
<div class="abs" style="left:30px;top:125px;width:1px;height:30px;background:#a6a6a6"></div>
<div class="abs" style="left:50px;top:165px;width:1px;height:531px;background:#a6a6a6"></div>
<div class="abs" style="left:70px;top:265px;width:1px;height:190px;background:#a6a6a6"></div>
<div class="abs" style="left:70px;top:705px;width:1px;height:11px;background:#a6a6a6"></div>
<div class="abs" style="left:15px;top:114px;width:6px;height:1px;background:#b8b8b8"></div>
<div class="abs" style="left:6px;top:110px;width:9px;height:9px;border:1px solid #909090;background:#fff"></div>
<div class="abs" style="left:8px;top:114px;width:5px;height:1px;background:#9a9a9a"></div>
<svg class="abs" style="left:29px;top:107px;overflow:visible" width="16" height="16" viewBox="0 0 16 16"><path d="M2 3V12.500A4.500 2 0 0 0 11 12.500V3" fill="#f2f2f2" stroke="#b0b0b0" stroke-width=".8"/><ellipse cx="6.500" cy="3" rx="4.500" ry="2" fill="#fafafa" stroke="#b0b0b0" stroke-width=".8"/><path d="M8 6H15L11 9.500H14L7 14.500L9.500 10H7Z" fill="#f5c22e" stroke="#e0981e" stroke-width=".6"/></svg>
<div class="t" style="left:55px;top:109px;letter-spacing:-0.1px;">Database Connections</div>
<div class="abs" style="left:35px;top:134px;width:6px;height:1px;background:#b8b8b8"></div>
<div class="abs" style="left:26px;top:130px;width:9px;height:9px;border:1px solid #909090;background:#fff"></div>
<div class="abs" style="left:28px;top:134px;width:5px;height:1px;background:#9a9a9a"></div>
<div class="abs" style="left:30px;top:132px;width:1px;height:5px;background:#9a9a9a"></div>
<svg class="abs" style="left:49px;top:127px;overflow:visible" width="16" height="16" viewBox="0 0 16 16"><path d="M.5 2.500H5L6.500 4H12.500V12.500H.5Z" fill="#f7d778" stroke="#e2a93a" stroke-width=".9"/><path d="M.5 5.500H12.500" stroke="#fbe9ad"/><path d="M9 8V14A3 1.300 0 0 0 15 14V8" fill="#eeeeee" stroke="#a8a8a8" stroke-width=".8"/><ellipse cx="12" cy="8" rx="3" ry="1.300" fill="#fafafa" stroke="#a8a8a8" stroke-width=".8"/></svg>
<div class="t" style="left:75px;top:129px;">Favourites</div>
<div class="abs" style="left:35px;top:154px;width:6px;height:1px;background:#b8b8b8"></div>
<div class="abs" style="left:26px;top:150px;width:9px;height:9px;border:1px solid #909090;background:#fff"></div>
<div class="abs" style="left:28px;top:154px;width:5px;height:1px;background:#9a9a9a"></div>
<svg class="abs" style="left:49px;top:147px;overflow:visible" width="24" height="16" viewBox="0 0 24 16"><rect x="1.500" y="1.500" width="7" height="12" rx="1" fill="#e2e2e2" stroke="#a0a0a0" stroke-width=".8"/><path d="M3 4H7M3 6H7" stroke="#9a9a9a" stroke-width=".8"/><path d="M7 7.500V13A3 1.300 0 0 0 13 13V7.500" fill="#efefef" stroke="#a8a8a8" stroke-width=".8"/><ellipse cx="10" cy="7.500" rx="3" ry="1.300" fill="#fafafa" stroke="#a8a8a8" stroke-width=".8"/><path d="M12 11.500L15 14.500L22 7" fill="none" stroke="#3fae3a" stroke-width="2.600"/></svg>
<div class="t" style="left:81px;top:149px;">employee</div>
<div class="abs" style="left:55px;top:174px;width:6px;height:1px;background:#b8b8b8"></div>
<div class="abs" style="left:46px;top:170px;width:9px;height:9px;border:1px solid #909090;background:#fff"></div>
<div class="abs" style="left:48px;top:174px;width:5px;height:1px;background:#9a9a9a"></div>
<div class="abs" style="left:50px;top:172px;width:1px;height:5px;background:#9a9a9a"></div>
<svg class="abs" style="left:69px;top:167px;overflow:visible" width="16" height="16" viewBox="0 0 16 16"><path d="M1 3V11A6 2.600 0 0 0 13 11V3" fill="#3c4658"/><path d="M1 3V6.500A6 2.600 0 0 0 13 6.500V3" fill="#5b86c6"/><ellipse cx="7" cy="3" rx="6" ry="2.600" fill="#7ea7e2"/><path d="M8.500 15.500A2 2 0 0 1 9 11.800A2.700 2.700 0 0 1 14 11.500A2 2 0 0 1 14.500 15.500Z" fill="#3f9df0"/></svg>
<div class="t b" style="left:95px;top:169px;letter-spacing:-0.18px;">Domains (15)</div>
<div class="abs" style="left:55px;top:194px;width:6px;height:1px;background:#b8b8b8"></div>
<div class="abs" style="left:46px;top:190px;width:9px;height:9px;border:1px solid #909090;background:#fff"></div>
<div class="abs" style="left:48px;top:194px;width:5px;height:1px;background:#9a9a9a"></div>
<div class="abs" style="left:50px;top:192px;width:1px;height:5px;background:#9a9a9a"></div>
<svg class="abs" style="left:69px;top:187px;overflow:visible" width="16" height="16" viewBox="0 0 16 16"><rect x=".5" y="1.500" width="14" height="13" fill="#eef4fd" stroke="#6d9be0"/><rect x="2" y="3" width="11" height="1.500" fill="#7cc36b"/><path d="M2 6.500H13M2 8.500H13M2 10.500H13M2 12.500H13" stroke="#8fb2e8" stroke-width="1"/><path d="M5.500 5.500V13.500" stroke="#c6d8f4" stroke-width="1"/></svg>
<div class="t b" style="left:95px;top:189px;">Tables (11)</div>
<div class="abs" style="left:50px;top:214px;width:11px;height:1px;background:#b8b8b8"></div>
<svg class="abs" style="left:69px;top:207px;overflow:visible" width="16" height="16" viewBox="0 0 16 16"><rect x=".5" y="1.500" width="14" height="13" fill="#eef4fd" stroke="#6d9be0"/><rect x="2" y="3" width="11" height="1.500" fill="#7cc36b"/><path d="M2 6.500H13M2 8.500H13M2 10.500H13M2 12.500H13" stroke="#8fb2e8" stroke-width="1"/><path d="M5.500 5.500V13.500" stroke="#c6d8f4" stroke-width="1"/><rect x="6" y="6" width="8" height="8" fill="#fff"/><text x="6.500" y="14" font-family="Liberation Sans,sans-serif" font-weight="bold" font-size="9" fill="#d81e2a">G</text></svg>
<div class="t" style="left:95px;top:209px;letter-spacing:-0.026px;">Global Temporary Tables (0)</div>
<div class="abs" style="left:55px;top:234px;width:6px;height:1px;background:#b8b8b8"></div>
<div class="abs" style="left:46px;top:230px;width:9px;height:9px;border:1px solid #909090;background:#fff"></div>
<div class="abs" style="left:48px;top:234px;width:5px;height:1px;background:#9a9a9a"></div>
<div class="abs" style="left:50px;top:232px;width:1px;height:5px;background:#9a9a9a"></div>
<svg class="abs" style="left:69px;top:227px;overflow:visible" width="16" height="16" viewBox="0 0 16 16"><rect x=".5" y="1.500" width="14" height="13" fill="#eef4fd" stroke="#6d9be0"/><rect x="2" y="3" width="11" height="1.500" fill="#7cc36b"/><path d="M2 6.500H13M2 8.500H13M2 10.500H13M2 12.500H13" stroke="#8fb2e8" stroke-width="1"/><path d="M5.500 5.500V13.500" stroke="#c6d8f4" stroke-width="1"/><rect x="5.500" y="8" width="4" height="7.500" rx="1" fill="#2e2e36"/><rect x="10.500" y="8" width="4" height="7.500" rx="1" fill="#2e2e36"/><rect x="6.500" y="6.500" width="2" height="2" fill="#444"/><rect x="11.500" y="6.500" width="2" height="2" fill="#444"/><rect x="6.500" y="11" width="2" height="2" fill="#9aa"/><rect x="11.500" y="11" width="2" height="2" fill="#9aa"/></svg>
<div class="t b" style="left:95px;top:229px;">Views (1)</div>
<div class="abs" style="left:55px;top:254px;width:6px;height:1px;background:#b8b8b8"></div>
<div class="abs" style="left:46px;top:250px;width:9px;height:9px;border:1px solid #909090;background:#fff"></div>
<div class="abs" style="left:48px;top:254px;width:5px;height:1px;background:#9a9a9a"></div>
<svg class="abs" style="left:69px;top:247px;overflow:visible" width="16" height="16" viewBox="0 0 16 16"><path d="M.6 6L8 2.500L15.400 6V11.800L8 15.500L.6 11.800Z" fill="#dedede" stroke="#a6a6a6" stroke-width=".9"/><path d="M8 9.500L15.400 6V11.800L8 15.500Z" fill="#c9c9c9"/><path d="M.6 6L8 9.500V15.500L.6 11.800Z" fill="#e0e0e0"/><path d="M.6 6L8 2.500L15.400 6L8 9.500Z" fill="#eeeeee"/><path d="M.6 6L8 9.500L15.400 6" fill="none" stroke="#cfcfcf" stroke-width=".6"/><path d="M5.9 2.2V3.7A2.100 1.100 0 0 0 10.1 3.7V2.2" fill="#e4e4e4" stroke="#b4b4b4" stroke-width=".5"/><ellipse cx="8" cy="2.2" rx="2.100" ry="1.100" fill="#fbfbfb" stroke="#b8b8b8" stroke-width=".5"/><path d="M2.1999999999999997 4V5.5A2.100 1.100 0 0 0 6.4 5.5V4" fill="#e4e4e4" stroke="#b4b4b4" stroke-width=".5"/><ellipse cx="4.3" cy="4" rx="2.100" ry="1.100" fill="#fbfbfb" stroke="#b8b8b8" stroke-width=".5"/><path d="M9.6 4V5.5A2.100 1.100 0 0 0 13.799999999999999 5.5V4" fill="#e4e4e4" stroke="#b4b4b4" stroke-width=".5"/><ellipse cx="11.7" cy="4" rx="2.100" ry="1.100" fill="#fbfbfb" stroke="#b8b8b8" stroke-width=".5"/><path d="M5.9 5.9V7.4A2.100 1.100 0 0 0 10.1 7.4V5.9" fill="#e4e4e4" stroke="#b4b4b4" stroke-width=".5"/><ellipse cx="8" cy="5.9" rx="2.100" ry="1.100" fill="#fbfbfb" stroke="#b8b8b8" stroke-width=".5"/></svg>
<div class="t b" style="left:95px;top:249px;">Procedures (10)</div>
<div class="abs" style="left:70px;top:274px;width:11px;height:1px;background:#b8b8b8"></div>
<svg class="abs" style="left:89px;top:267px;overflow:visible" width="16" height="16" viewBox="0 0 16 16"><path d="M.6 6L8 2.500L15.400 6V11.800L8 15.500L.6 11.800Z" fill="#dedede" stroke="#a6a6a6" stroke-width=".9"/><path d="M8 9.500L15.400 6V11.800L8 15.500Z" fill="#c9c9c9"/><path d="M.6 6L8 9.500V15.500L.6 11.800Z" fill="#e0e0e0"/><path d="M.6 6L8 2.500L15.400 6L8 9.500Z" fill="#eeeeee"/><path d="M.6 6L8 9.500L15.400 6" fill="none" stroke="#cfcfcf" stroke-width=".6"/><path d="M5.9 2.2V3.7A2.100 1.100 0 0 0 10.1 3.7V2.2" fill="#e4e4e4" stroke="#b4b4b4" stroke-width=".5"/><ellipse cx="8" cy="2.2" rx="2.100" ry="1.100" fill="#fbfbfb" stroke="#b8b8b8" stroke-width=".5"/><path d="M2.1999999999999997 4V5.5A2.100 1.100 0 0 0 6.4 5.5V4" fill="#e4e4e4" stroke="#b4b4b4" stroke-width=".5"/><ellipse cx="4.3" cy="4" rx="2.100" ry="1.100" fill="#fbfbfb" stroke="#b8b8b8" stroke-width=".5"/><path d="M9.6 4V5.5A2.100 1.100 0 0 0 13.799999999999999 5.5V4" fill="#e4e4e4" stroke="#b4b4b4" stroke-width=".5"/><ellipse cx="11.7" cy="4" rx="2.100" ry="1.100" fill="#fbfbfb" stroke="#b8b8b8" stroke-width=".5"/><path d="M5.9 5.9V7.4A2.100 1.100 0 0 0 10.1 7.4V5.9" fill="#e4e4e4" stroke="#b4b4b4" stroke-width=".5"/><ellipse cx="8" cy="5.9" rx="2.100" ry="1.100" fill="#fbfbfb" stroke="#b8b8b8" stroke-width=".5"/></svg>
<div class="t" style="left:115px;top:269px;letter-spacing:-0.139px;">ADD_EMP_PROJ</div>
<div class="abs" style="left:70px;top:294px;width:11px;height:1px;background:#b8b8b8"></div>
<svg class="abs" style="left:89px;top:287px;overflow:visible" width="16" height="16" viewBox="0 0 16 16"><path d="M.6 6L8 2.500L15.400 6V11.800L8 15.500L.6 11.800Z" fill="#dedede" stroke="#a6a6a6" stroke-width=".9"/><path d="M8 9.500L15.400 6V11.800L8 15.500Z" fill="#c9c9c9"/><path d="M.6 6L8 9.500V15.500L.6 11.800Z" fill="#e0e0e0"/><path d="M.6 6L8 2.500L15.400 6L8 9.500Z" fill="#eeeeee"/><path d="M.6 6L8 9.500L15.400 6" fill="none" stroke="#cfcfcf" stroke-width=".6"/><path d="M5.9 2.2V3.7A2.100 1.100 0 0 0 10.1 3.7V2.2" fill="#e4e4e4" stroke="#b4b4b4" stroke-width=".5"/><ellipse cx="8" cy="2.2" rx="2.100" ry="1.100" fill="#fbfbfb" stroke="#b8b8b8" stroke-width=".5"/><path d="M2.1999999999999997 4V5.5A2.100 1.100 0 0 0 6.4 5.5V4" fill="#e4e4e4" stroke="#b4b4b4" stroke-width=".5"/><ellipse cx="4.3" cy="4" rx="2.100" ry="1.100" fill="#fbfbfb" stroke="#b8b8b8" stroke-width=".5"/><path d="M9.6 4V5.5A2.100 1.100 0 0 0 13.799999999999999 5.5V4" fill="#e4e4e4" stroke="#b4b4b4" stroke-width=".5"/><ellipse cx="11.7" cy="4" rx="2.100" ry="1.100" fill="#fbfbfb" stroke="#b8b8b8" stroke-width=".5"/><path d="M5.9 5.9V7.4A2.100 1.100 0 0 0 10.1 7.4V5.9" fill="#e4e4e4" stroke="#b4b4b4" stroke-width=".5"/><ellipse cx="8" cy="5.9" rx="2.100" ry="1.100" fill="#fbfbfb" stroke="#b8b8b8" stroke-width=".5"/></svg>
<div class="abs" style="left:109px;top:285px;width:79px;height:20px;background:#7fa4dd;border:1px solid #6f95d2"></div>
<div class="t" style="left:115px;top:289px;letter-spacing:-0.479px;">ALL_LANGS</div>
<div class="abs" style="left:70px;top:314px;width:11px;height:1px;background:#b8b8b8"></div>
<svg class="abs" style="left:89px;top:307px;overflow:visible" width="16" height="16" viewBox="0 0 16 16"><path d="M.6 6L8 2.500L15.400 6V11.800L8 15.500L.6 11.800Z" fill="#dedede" stroke="#a6a6a6" stroke-width=".9"/><path d="M8 9.500L15.400 6V11.800L8 15.500Z" fill="#c9c9c9"/><path d="M.6 6L8 9.500V15.500L.6 11.800Z" fill="#e0e0e0"/><path d="M.6 6L8 2.500L15.400 6L8 9.500Z" fill="#eeeeee"/><path d="M.6 6L8 9.500L15.400 6" fill="none" stroke="#cfcfcf" stroke-width=".6"/><path d="M5.9 2.2V3.7A2.100 1.100 0 0 0 10.1 3.7V2.2" fill="#e4e4e4" stroke="#b4b4b4" stroke-width=".5"/><ellipse cx="8" cy="2.2" rx="2.100" ry="1.100" fill="#fbfbfb" stroke="#b8b8b8" stroke-width=".5"/><path d="M2.1999999999999997 4V5.5A2.100 1.100 0 0 0 6.4 5.5V4" fill="#e4e4e4" stroke="#b4b4b4" stroke-width=".5"/><ellipse cx="4.3" cy="4" rx="2.100" ry="1.100" fill="#fbfbfb" stroke="#b8b8b8" stroke-width=".5"/><path d="M9.6 4V5.5A2.100 1.100 0 0 0 13.799999999999999 5.5V4" fill="#e4e4e4" stroke="#b4b4b4" stroke-width=".5"/><ellipse cx="11.7" cy="4" rx="2.100" ry="1.100" fill="#fbfbfb" stroke="#b8b8b8" stroke-width=".5"/><path d="M5.9 5.9V7.4A2.100 1.100 0 0 0 10.1 7.4V5.9" fill="#e4e4e4" stroke="#b4b4b4" stroke-width=".5"/><ellipse cx="8" cy="5.9" rx="2.100" ry="1.100" fill="#fbfbfb" stroke="#b8b8b8" stroke-width=".5"/></svg>
<div class="t" style="left:115px;top:309px;letter-spacing:-0.231px;">DELETE_EMPLOYEE</div>
<div class="abs" style="left:70px;top:334px;width:11px;height:1px;background:#b8b8b8"></div>
<svg class="abs" style="left:89px;top:327px;overflow:visible" width="16" height="16" viewBox="0 0 16 16"><path d="M.6 6L8 2.500L15.400 6V11.800L8 15.500L.6 11.800Z" fill="#dedede" stroke="#a6a6a6" stroke-width=".9"/><path d="M8 9.500L15.400 6V11.800L8 15.500Z" fill="#c9c9c9"/><path d="M.6 6L8 9.500V15.500L.6 11.800Z" fill="#e0e0e0"/><path d="M.6 6L8 2.500L15.400 6L8 9.500Z" fill="#eeeeee"/><path d="M.6 6L8 9.500L15.400 6" fill="none" stroke="#cfcfcf" stroke-width=".6"/><path d="M5.9 2.2V3.7A2.100 1.100 0 0 0 10.1 3.7V2.2" fill="#e4e4e4" stroke="#b4b4b4" stroke-width=".5"/><ellipse cx="8" cy="2.2" rx="2.100" ry="1.100" fill="#fbfbfb" stroke="#b8b8b8" stroke-width=".5"/><path d="M2.1999999999999997 4V5.5A2.100 1.100 0 0 0 6.4 5.5V4" fill="#e4e4e4" stroke="#b4b4b4" stroke-width=".5"/><ellipse cx="4.3" cy="4" rx="2.100" ry="1.100" fill="#fbfbfb" stroke="#b8b8b8" stroke-width=".5"/><path d="M9.6 4V5.5A2.100 1.100 0 0 0 13.799999999999999 5.5V4" fill="#e4e4e4" stroke="#b4b4b4" stroke-width=".5"/><ellipse cx="11.7" cy="4" rx="2.100" ry="1.100" fill="#fbfbfb" stroke="#b8b8b8" stroke-width=".5"/><path d="M5.9 5.9V7.4A2.100 1.100 0 0 0 10.1 7.4V5.9" fill="#e4e4e4" stroke="#b4b4b4" stroke-width=".5"/><ellipse cx="8" cy="5.9" rx="2.100" ry="1.100" fill="#fbfbfb" stroke="#b8b8b8" stroke-width=".5"/></svg>
<div class="t" style="left:115px;top:329px;letter-spacing:-0.104px;">DEPT_BUDGET</div>
<div class="abs" style="left:70px;top:354px;width:11px;height:1px;background:#b8b8b8"></div>
<svg class="abs" style="left:89px;top:347px;overflow:visible" width="16" height="16" viewBox="0 0 16 16"><path d="M.6 6L8 2.500L15.400 6V11.800L8 15.500L.6 11.800Z" fill="#dedede" stroke="#a6a6a6" stroke-width=".9"/><path d="M8 9.500L15.400 6V11.800L8 15.500Z" fill="#c9c9c9"/><path d="M.6 6L8 9.500V15.500L.6 11.800Z" fill="#e0e0e0"/><path d="M.6 6L8 2.500L15.400 6L8 9.500Z" fill="#eeeeee"/><path d="M.6 6L8 9.500L15.400 6" fill="none" stroke="#cfcfcf" stroke-width=".6"/><path d="M5.9 2.2V3.7A2.100 1.100 0 0 0 10.1 3.7V2.2" fill="#e4e4e4" stroke="#b4b4b4" stroke-width=".5"/><ellipse cx="8" cy="2.2" rx="2.100" ry="1.100" fill="#fbfbfb" stroke="#b8b8b8" stroke-width=".5"/><path d="M2.1999999999999997 4V5.5A2.100 1.100 0 0 0 6.4 5.5V4" fill="#e4e4e4" stroke="#b4b4b4" stroke-width=".5"/><ellipse cx="4.3" cy="4" rx="2.100" ry="1.100" fill="#fbfbfb" stroke="#b8b8b8" stroke-width=".5"/><path d="M9.6 4V5.5A2.100 1.100 0 0 0 13.799999999999999 5.5V4" fill="#e4e4e4" stroke="#b4b4b4" stroke-width=".5"/><ellipse cx="11.7" cy="4" rx="2.100" ry="1.100" fill="#fbfbfb" stroke="#b8b8b8" stroke-width=".5"/><path d="M5.9 5.9V7.4A2.100 1.100 0 0 0 10.1 7.4V5.9" fill="#e4e4e4" stroke="#b4b4b4" stroke-width=".5"/><ellipse cx="8" cy="5.9" rx="2.100" ry="1.100" fill="#fbfbfb" stroke="#b8b8b8" stroke-width=".5"/></svg>
<div class="t" style="left:115px;top:349px;letter-spacing:-0.120px;">GET_EMP_PROJ</div>
<div class="abs" style="left:70px;top:374px;width:11px;height:1px;background:#b8b8b8"></div>
<svg class="abs" style="left:89px;top:367px;overflow:visible" width="16" height="16" viewBox="0 0 16 16"><path d="M.6 6L8 2.500L15.400 6V11.800L8 15.500L.6 11.800Z" fill="#dedede" stroke="#a6a6a6" stroke-width=".9"/><path d="M8 9.500L15.400 6V11.800L8 15.500Z" fill="#c9c9c9"/><path d="M.6 6L8 9.500V15.500L.6 11.800Z" fill="#e0e0e0"/><path d="M.6 6L8 2.500L15.400 6L8 9.500Z" fill="#eeeeee"/><path d="M.6 6L8 9.500L15.400 6" fill="none" stroke="#cfcfcf" stroke-width=".6"/><path d="M5.9 2.2V3.7A2.100 1.100 0 0 0 10.1 3.7V2.2" fill="#e4e4e4" stroke="#b4b4b4" stroke-width=".5"/><ellipse cx="8" cy="2.2" rx="2.100" ry="1.100" fill="#fbfbfb" stroke="#b8b8b8" stroke-width=".5"/><path d="M2.1999999999999997 4V5.5A2.100 1.100 0 0 0 6.4 5.5V4" fill="#e4e4e4" stroke="#b4b4b4" stroke-width=".5"/><ellipse cx="4.3" cy="4" rx="2.100" ry="1.100" fill="#fbfbfb" stroke="#b8b8b8" stroke-width=".5"/><path d="M9.6 4V5.5A2.100 1.100 0 0 0 13.799999999999999 5.5V4" fill="#e4e4e4" stroke="#b4b4b4" stroke-width=".5"/><ellipse cx="11.7" cy="4" rx="2.100" ry="1.100" fill="#fbfbfb" stroke="#b8b8b8" stroke-width=".5"/><path d="M5.9 5.9V7.4A2.100 1.100 0 0 0 10.1 7.4V5.9" fill="#e4e4e4" stroke="#b4b4b4" stroke-width=".5"/><ellipse cx="8" cy="5.9" rx="2.100" ry="1.100" fill="#fbfbfb" stroke="#b8b8b8" stroke-width=".5"/></svg>
<div class="t" style="left:115px;top:369px;letter-spacing:-0.453px;">MAIL_LABEL</div>
<div class="abs" style="left:70px;top:394px;width:11px;height:1px;background:#b8b8b8"></div>
<svg class="abs" style="left:89px;top:387px;overflow:visible" width="16" height="16" viewBox="0 0 16 16"><path d="M.6 6L8 2.500L15.400 6V11.800L8 15.500L.6 11.800Z" fill="#dedede" stroke="#a6a6a6" stroke-width=".9"/><path d="M8 9.500L15.400 6V11.800L8 15.500Z" fill="#c9c9c9"/><path d="M.6 6L8 9.500V15.500L.6 11.800Z" fill="#e0e0e0"/><path d="M.6 6L8 2.500L15.400 6L8 9.500Z" fill="#eeeeee"/><path d="M.6 6L8 9.500L15.400 6" fill="none" stroke="#cfcfcf" stroke-width=".6"/><path d="M5.9 2.2V3.7A2.100 1.100 0 0 0 10.1 3.7V2.2" fill="#e4e4e4" stroke="#b4b4b4" stroke-width=".5"/><ellipse cx="8" cy="2.2" rx="2.100" ry="1.100" fill="#fbfbfb" stroke="#b8b8b8" stroke-width=".5"/><path d="M2.1999999999999997 4V5.5A2.100 1.100 0 0 0 6.4 5.5V4" fill="#e4e4e4" stroke="#b4b4b4" stroke-width=".5"/><ellipse cx="4.3" cy="4" rx="2.100" ry="1.100" fill="#fbfbfb" stroke="#b8b8b8" stroke-width=".5"/><path d="M9.6 4V5.5A2.100 1.100 0 0 0 13.799999999999999 5.5V4" fill="#e4e4e4" stroke="#b4b4b4" stroke-width=".5"/><ellipse cx="11.7" cy="4" rx="2.100" ry="1.100" fill="#fbfbfb" stroke="#b8b8b8" stroke-width=".5"/><path d="M5.9 5.9V7.4A2.100 1.100 0 0 0 10.1 7.4V5.9" fill="#e4e4e4" stroke="#b4b4b4" stroke-width=".5"/><ellipse cx="8" cy="5.9" rx="2.100" ry="1.100" fill="#fbfbfb" stroke="#b8b8b8" stroke-width=".5"/></svg>
<div class="t" style="left:115px;top:389px;letter-spacing:-0.150px;">ORG_CHART</div>
<div class="abs" style="left:70px;top:414px;width:11px;height:1px;background:#b8b8b8"></div>
<svg class="abs" style="left:89px;top:407px;overflow:visible" width="16" height="16" viewBox="0 0 16 16"><path d="M.6 6L8 2.500L15.400 6V11.800L8 15.500L.6 11.800Z" fill="#dedede" stroke="#a6a6a6" stroke-width=".9"/><path d="M8 9.500L15.400 6V11.800L8 15.500Z" fill="#c9c9c9"/><path d="M.6 6L8 9.500V15.500L.6 11.800Z" fill="#e0e0e0"/><path d="M.6 6L8 2.500L15.400 6L8 9.500Z" fill="#eeeeee"/><path d="M.6 6L8 9.500L15.400 6" fill="none" stroke="#cfcfcf" stroke-width=".6"/><path d="M5.9 2.2V3.7A2.100 1.100 0 0 0 10.1 3.7V2.2" fill="#e4e4e4" stroke="#b4b4b4" stroke-width=".5"/><ellipse cx="8" cy="2.2" rx="2.100" ry="1.100" fill="#fbfbfb" stroke="#b8b8b8" stroke-width=".5"/><path d="M2.1999999999999997 4V5.5A2.100 1.100 0 0 0 6.4 5.5V4" fill="#e4e4e4" stroke="#b4b4b4" stroke-width=".5"/><ellipse cx="4.3" cy="4" rx="2.100" ry="1.100" fill="#fbfbfb" stroke="#b8b8b8" stroke-width=".5"/><path d="M9.6 4V5.5A2.100 1.100 0 0 0 13.799999999999999 5.5V4" fill="#e4e4e4" stroke="#b4b4b4" stroke-width=".5"/><ellipse cx="11.7" cy="4" rx="2.100" ry="1.100" fill="#fbfbfb" stroke="#b8b8b8" stroke-width=".5"/><path d="M5.9 5.9V7.4A2.100 1.100 0 0 0 10.1 7.4V5.9" fill="#e4e4e4" stroke="#b4b4b4" stroke-width=".5"/><ellipse cx="8" cy="5.9" rx="2.100" ry="1.100" fill="#fbfbfb" stroke="#b8b8b8" stroke-width=".5"/></svg>
<div class="t" style="left:115px;top:409px;">SHIP_ORDER</div>
<div class="abs" style="left:70px;top:434px;width:11px;height:1px;background:#b8b8b8"></div>
<svg class="abs" style="left:89px;top:427px;overflow:visible" width="16" height="16" viewBox="0 0 16 16"><path d="M.6 6L8 2.500L15.400 6V11.800L8 15.500L.6 11.800Z" fill="#dedede" stroke="#a6a6a6" stroke-width=".9"/><path d="M8 9.500L15.400 6V11.800L8 15.500Z" fill="#c9c9c9"/><path d="M.6 6L8 9.500V15.500L.6 11.800Z" fill="#e0e0e0"/><path d="M.6 6L8 2.500L15.400 6L8 9.500Z" fill="#eeeeee"/><path d="M.6 6L8 9.500L15.400 6" fill="none" stroke="#cfcfcf" stroke-width=".6"/><path d="M5.9 2.2V3.7A2.100 1.100 0 0 0 10.1 3.7V2.2" fill="#e4e4e4" stroke="#b4b4b4" stroke-width=".5"/><ellipse cx="8" cy="2.2" rx="2.100" ry="1.100" fill="#fbfbfb" stroke="#b8b8b8" stroke-width=".5"/><path d="M2.1999999999999997 4V5.5A2.100 1.100 0 0 0 6.4 5.5V4" fill="#e4e4e4" stroke="#b4b4b4" stroke-width=".5"/><ellipse cx="4.3" cy="4" rx="2.100" ry="1.100" fill="#fbfbfb" stroke="#b8b8b8" stroke-width=".5"/><path d="M9.6 4V5.5A2.100 1.100 0 0 0 13.799999999999999 5.5V4" fill="#e4e4e4" stroke="#b4b4b4" stroke-width=".5"/><ellipse cx="11.7" cy="4" rx="2.100" ry="1.100" fill="#fbfbfb" stroke="#b8b8b8" stroke-width=".5"/><path d="M5.9 5.9V7.4A2.100 1.100 0 0 0 10.1 7.4V5.9" fill="#e4e4e4" stroke="#b4b4b4" stroke-width=".5"/><ellipse cx="8" cy="5.9" rx="2.100" ry="1.100" fill="#fbfbfb" stroke="#b8b8b8" stroke-width=".5"/></svg>
<div class="t" style="left:115px;top:429px;letter-spacing:-0.212px;">SHOW_LANGS</div>
<div class="abs" style="left:70px;top:454px;width:11px;height:1px;background:#b8b8b8"></div>
<svg class="abs" style="left:89px;top:447px;overflow:visible" width="16" height="16" viewBox="0 0 16 16"><path d="M.6 6L8 2.500L15.400 6V11.800L8 15.500L.6 11.800Z" fill="#dedede" stroke="#a6a6a6" stroke-width=".9"/><path d="M8 9.500L15.400 6V11.800L8 15.500Z" fill="#c9c9c9"/><path d="M.6 6L8 9.500V15.500L.6 11.800Z" fill="#e0e0e0"/><path d="M.6 6L8 2.500L15.400 6L8 9.500Z" fill="#eeeeee"/><path d="M.6 6L8 9.500L15.400 6" fill="none" stroke="#cfcfcf" stroke-width=".6"/><path d="M5.9 2.2V3.7A2.100 1.100 0 0 0 10.1 3.7V2.2" fill="#e4e4e4" stroke="#b4b4b4" stroke-width=".5"/><ellipse cx="8" cy="2.2" rx="2.100" ry="1.100" fill="#fbfbfb" stroke="#b8b8b8" stroke-width=".5"/><path d="M2.1999999999999997 4V5.5A2.100 1.100 0 0 0 6.4 5.5V4" fill="#e4e4e4" stroke="#b4b4b4" stroke-width=".5"/><ellipse cx="4.3" cy="4" rx="2.100" ry="1.100" fill="#fbfbfb" stroke="#b8b8b8" stroke-width=".5"/><path d="M9.6 4V5.5A2.100 1.100 0 0 0 13.799999999999999 5.5V4" fill="#e4e4e4" stroke="#b4b4b4" stroke-width=".5"/><ellipse cx="11.7" cy="4" rx="2.100" ry="1.100" fill="#fbfbfb" stroke="#b8b8b8" stroke-width=".5"/><path d="M5.9 5.9V7.4A2.100 1.100 0 0 0 10.1 7.4V5.9" fill="#e4e4e4" stroke="#b4b4b4" stroke-width=".5"/><ellipse cx="8" cy="5.9" rx="2.100" ry="1.100" fill="#fbfbfb" stroke="#b8b8b8" stroke-width=".5"/></svg>
<div class="t" style="left:115px;top:449px;letter-spacing:-0.101px;">SUB_TOT_BUDGET</div>
<div class="abs" style="left:50px;top:474px;width:11px;height:1px;background:#b8b8b8"></div>
<svg class="abs" style="left:69px;top:467px;overflow:visible" width="16" height="16" viewBox="0 0 16 16"><rect x=".5" y="1.500" width="7" height="12" fill="#dfeafb" stroke="#6d9be0"/><rect x="2" y="3" width="4" height="1.500" fill="#7cc36b"/><path d="M2 6.500H6M2 8.500H6M2 10.500H6" stroke="#8fb2e8"/><text x="9.500" y="7" font-family="Liberation Sans,sans-serif" font-size="7" fill="#333">x</text><text x="9.500" y="13" font-family="Liberation Sans,sans-serif" font-size="7" fill="#333">y</text></svg>
<div class="t" style="left:95px;top:469px;">Functions (0)</div>
<div class="abs" style="left:50px;top:494px;width:11px;height:1px;background:#b8b8b8"></div>
<svg class="abs" style="left:69px;top:487px;overflow:visible" width="16" height="16" viewBox="0 0 16 16"><path d="M8 1L15 4.500L13.500 12L8 15L2.500 12L1 4.500Z" fill="#f6b92e" stroke="#e8981c" stroke-width=".8"/><path d="M1 4.500L8 8L15 4.500M8 8V15" fill="none" stroke="#fbe08a" stroke-width="1"/><path d="M4 3L11 6.500" stroke="#fff2c0" stroke-width="1.200"/></svg>
<div class="t" style="left:95px;top:489px;">Packages (0)</div>
<div class="abs" style="left:55px;top:514px;width:6px;height:1px;background:#b8b8b8"></div>
<div class="abs" style="left:46px;top:510px;width:9px;height:9px;border:1px solid #909090;background:#fff"></div>
<div class="abs" style="left:48px;top:514px;width:5px;height:1px;background:#9a9a9a"></div>
<div class="abs" style="left:50px;top:512px;width:1px;height:5px;background:#9a9a9a"></div>
<svg class="abs" style="left:69px;top:507px;overflow:visible" width="16" height="16" viewBox="0 0 16 16"><circle cx="8" cy="8" r="5.200" fill="#dadada"/><g stroke="#dadada" stroke-width="3"><path d="M8 1V15M1 8H15M3 3L13 13M13 3L3 13"/></g><circle cx="8" cy="8" r="2.300" fill="#f4f4f4"/></svg>
<div class="t b" style="left:95px;top:509px;">Triggers for Table (4)</div>
<div class="abs" style="left:50px;top:534px;width:11px;height:1px;background:#b8b8b8"></div>
<svg class="abs" style="left:69px;top:527px;overflow:visible" width="16" height="16" viewBox="0 0 16 16"><circle cx="8" cy="7" r="5" fill="#dadada"/><g stroke="#dadada" stroke-width="2.800"><path d="M8 .5V13.500M1.500 7H14.500M3.400 2.400L12.600 11.600M12.600 2.400L3.400 11.600"/></g><circle cx="8" cy="7" r="2.200" fill="#f2f2f2"/><text x="1.500" y="15.500" font-family="Liberation Sans,sans-serif" font-weight="bold" font-size="6" fill="#2a2ae0">DDL</text></svg>
<div class="t" style="left:95px;top:529px;letter-spacing:-0.044px;">Triggers for DDL (0)</div>
<div class="abs" style="left:50px;top:554px;width:11px;height:1px;background:#b8b8b8"></div>
<svg class="abs" style="left:69px;top:547px;overflow:visible" width="16" height="16" viewBox="0 0 16 16"><circle cx="8" cy="7" r="5" fill="#dadada"/><g stroke="#dadada" stroke-width="2.800"><path d="M8 .5V13.500M1.500 7H14.500M3.400 2.400L12.600 11.600M12.600 2.400L3.400 11.600"/></g><circle cx="8" cy="7" r="2.200" fill="#f2f2f2"/><text x="4" y="15.500" font-family="Liberation Sans,sans-serif" font-weight="bold" font-size="6" fill="#2a2ae0">DB</text></svg>
<div class="t" style="left:95px;top:549px;">Triggers for Database (0)</div>
<div class="abs" style="left:55px;top:574px;width:6px;height:1px;background:#b8b8b8"></div>
<div class="abs" style="left:46px;top:570px;width:9px;height:9px;border:1px solid #909090;background:#fff"></div>
<div class="abs" style="left:48px;top:574px;width:5px;height:1px;background:#9a9a9a"></div>
<div class="abs" style="left:50px;top:572px;width:1px;height:5px;background:#9a9a9a"></div>
<svg class="abs" style="left:69px;top:567px;overflow:visible" width="16" height="16" viewBox="0 0 16 16"><text x="2" y="6" font-family="Liberation Sans,sans-serif" font-size="5" fill="#3b78d8">1</text><text x="6" y="11" font-family="Liberation Sans,sans-serif" font-size="5" fill="#3b78d8">2</text><text x="10" y="16" font-family="Liberation Sans,sans-serif" font-size="5" fill="#3b78d8">3</text><path d="M8 1.500L11 1L13 4H15.500V9H11V6.500L9 5Z" fill="#3d9a3d"/></svg>
<div class="t b" style="left:95px;top:569px;">Sequences (2)</div>
<div class="abs" style="left:55px;top:594px;width:6px;height:1px;background:#b8b8b8"></div>
<div class="abs" style="left:46px;top:590px;width:9px;height:9px;border:1px solid #909090;background:#fff"></div>
<div class="abs" style="left:48px;top:594px;width:5px;height:1px;background:#9a9a9a"></div>
<div class="abs" style="left:50px;top:592px;width:1px;height:5px;background:#9a9a9a"></div>
<svg class="abs" style="left:69px;top:587px;overflow:visible" width="16" height="16" viewBox="0 0 16 16"><rect x=".5" y=".5" width="15" height="15" rx="1.500" fill="#d9362c"/><path d="M8 3.500L12.500 12H3.500Z" fill="#fff"/><rect x="7.400" y="6.500" width="1.200" height="3" fill="#d9362c"/><rect x="7.400" y="10.200" width="1.200" height="1" fill="#d9362c"/></svg>
<div class="t b" style="left:95px;top:589px;">Exceptions (5)</div>
<div class="abs" style="left:50px;top:614px;width:11px;height:1px;background:#b8b8b8"></div>
<svg class="abs" style="left:69px;top:607px;overflow:visible" width="16" height="16" viewBox="0 0 16 16"><path d="M.5 2.500H6L7.500 4H15.500V14.500H.5Z" fill="#2a2a2a"/><path d="M3.500 9L7 12.500L13 6.500" fill="none" stroke="#e8492b" stroke-width="2.400"/></svg>
<div class="t" style="left:95px;top:609px;">UDFs (0)</div>
<div class="abs" style="left:55px;top:634px;width:6px;height:1px;background:#b8b8b8"></div>
<div class="abs" style="left:46px;top:630px;width:9px;height:9px;border:1px solid #909090;background:#fff"></div>
<div class="abs" style="left:48px;top:634px;width:5px;height:1px;background:#9a9a9a"></div>
<div class="abs" style="left:50px;top:632px;width:1px;height:5px;background:#9a9a9a"></div>
<svg class="abs" style="left:69px;top:627px;overflow:visible" width="16" height="16" viewBox="0 0 16 16"><path d="M2.500 15A5.500 6 0 0 1 13.500 15Z" fill="#7aa4ea" stroke="#4a78cc" stroke-width=".8"/><ellipse cx="8" cy="5.500" rx="3.600" ry="4.200" fill="#9fc0f4" stroke="#4a78cc" stroke-width=".8"/></svg>
<div class="t b" style="left:95px;top:629px;">Users (1)</div>
<div class="abs" style="left:50px;top:654px;width:11px;height:1px;background:#b8b8b8"></div>
<svg class="abs" style="left:69px;top:647px;overflow:visible" width="16" height="16" viewBox="0 0 16 16"><circle cx="4.2" cy="5.2" r="1.9" fill="#f59a23"/><path d="M0.7000000000000002 12.8Q0.7000000000000002 6.8 4.2 6.8Q7.7 6.8 7.7 12.8Z" fill="#f59a23"/><circle cx="11.8" cy="5.2" r="1.9" fill="#5cbf2a"/><path d="M8.3 12.8Q8.3 6.8 11.8 6.8Q15.3 6.8 15.3 12.8Z" fill="#5cbf2a"/><circle cx="8" cy="6.200" r="2.200" fill="#3f95e6"/><path d="M3.800 14Q3.800 8.600 8 8.600Q12.200 8.600 12.200 14Z" fill="#2a74b4"/></svg>
<div class="t" style="left:95px;top:649px;">Roles (0)</div>
<div class="abs" style="left:55px;top:674px;width:6px;height:1px;background:#b8b8b8"></div>
<div class="abs" style="left:46px;top:670px;width:9px;height:9px;border:1px solid #909090;background:#fff"></div>
<div class="abs" style="left:48px;top:674px;width:5px;height:1px;background:#9a9a9a"></div>
<div class="abs" style="left:50px;top:672px;width:1px;height:5px;background:#9a9a9a"></div>
<svg class="abs" style="left:69px;top:667px;overflow:visible" width="16" height="16" viewBox="0 0 16 16"><rect x="1.500" y="1.500" width="13" height="13" fill="#eef4fd" stroke="#6d9be0"/><rect x="7" y="3" width="6" height="1.500" fill="#7cc36b"/><path d="M7 6.500H13M7 8.500H13M7 10.500H13M7 12.500H13" stroke="#8fb2e8"/><rect x="3.500" y=".5" width="3" height="15" fill="#fde4e4" stroke="#e8352e" stroke-width="1.100"/><path d="M0 9.500H4" stroke="#e8352e" stroke-width="1.200"/></svg>
<div class="t b" style="left:95px;top:669px;">Indices (38)</div>
<div class="abs" style="left:55px;top:694px;width:6px;height:1px;background:#b8b8b8"></div>
<div class="abs" style="left:46px;top:690px;width:9px;height:9px;border:1px solid #909090;background:#fff"></div>
<div class="abs" style="left:48px;top:694px;width:5px;height:1px;background:#9a9a9a"></div>
<svg class="abs" style="left:69px;top:687px;overflow:visible" width="16" height="16" viewBox="0 0 16 16"><path d="M2.500 .5H10.500L13.500 3.500V15.500H2.500Z" fill="#f3f6fd" stroke="#7d8fd0" stroke-width=".9"/><path d="M10.500 .5L13.500 3.500H10.500Z" fill="#4a56b8"/><rect x="4.500" y="6.500" width="7" height="6" fill="#fff" stroke="#9ab"/><rect x="5" y="7" width="6" height="1.500" fill="#7cc36b"/><path d="M5 10H11M5 11.500H11" stroke="#e9a96a" stroke-width=".9"/></svg>
<div class="t b" style="left:95px;top:689px;">Tablespaces (1)</div>
<div class="abs" style="left:70px;top:714px;width:11px;height:1px;background:#b8b8b8"></div>
<svg class="abs" style="left:89px;top:707px;overflow:visible" width="16" height="16" viewBox="0 0 16 16"><path d="M2.500 .5H10.500L13.500 3.500V15.500H2.500Z" fill="#f3f6fd" stroke="#7d8fd0" stroke-width=".9"/><path d="M10.500 .5L13.500 3.500H10.500Z" fill="#4a56b8"/><rect x="4.500" y="6.500" width="7" height="6" fill="#fff" stroke="#9ab"/><rect x="5" y="7" width="6" height="1.500" fill="#7cc36b"/><path d="M5 10H11M5 11.500H11" stroke="#e9a96a" stroke-width=".9"/></svg>
<div class="t" style="left:115px;top:709px;letter-spacing:-0.1px;">NEW_TABLESPACE_1</div>
<svg class="abs" style="left:9px;top:82px;overflow:visible" width="16" height="16" viewBox="0 0 16 16"><linearGradient id="gplug" x1="0" y1="0" x2="1" y2="1"><stop offset="0" stop-color="#8ab2f0"/><stop offset="1" stop-color="#4f82dc"/></linearGradient><path d="M.5 15.500L.8 13L3.500 8.500L5.500 6.500L7.500 3.800L10.500 2.500L12.500 .5L15.500 1L15.200 4L13 5.500L13.300 8L11 9.800L9.500 10.200L9 12.500L5.500 14L3 15.800Z" fill="url(#gplug)" stroke="#4a7ad6" stroke-width=".6"/><path d="M5.200 6.500L10 11" stroke="#4fb35a" stroke-width="1.400"/><path d="M3 10.500L7 13M9.500 4L12.500 6.500" stroke="#a9c6f6" stroke-width=".8"/></svg>
<svg class="abs" style="left:33px;top:82px;overflow:visible" width="16" height="16" viewBox="0 0 16 16"><linearGradient id="gcyl" x1="0" y1="0" x2="1" y2="0"><stop offset="0" stop-color="#ffffff"/><stop offset="1" stop-color="#dedede"/></linearGradient><path d="M2.200 4.500V13.500A5.300 2 0 0 0 12.800 13.500V4.500" fill="url(#gcyl)" stroke="#aaaaaa" stroke-width=".9"/><ellipse cx="7.500" cy="4.500" rx="5.300" ry="2.200" fill="#fefefe" stroke="#aaaaaa" stroke-width=".9"/><circle cx="12.300" cy="13" r="3.400" fill="#3f9d38" stroke="#2f8a2c" stroke-width=".6"/><path d="M10.300 13H14.300M12.300 11V15" stroke="#fff" stroke-width="1.400"/></svg>
<svg class="abs" style="left:57px;top:82px;overflow:visible" width="16" height="16" viewBox="0 0 16 16"><linearGradient id="gfa" x1="0" y1="0" x2="0" y2="1"><stop offset="0" stop-color="#fef6cc"/><stop offset="1" stop-color="#f6d058"/></linearGradient><path d="M1 3.500H6.500L7.500 5H15V14.500H1Z" fill="url(#gfa)" stroke="#e8a840" stroke-width="1"/><path d="M2 6.500H14" stroke="#fff8d8"/><path d="M3.500 8.500H9.500" stroke="#e8b860" stroke-width=".9"/><circle cx="12.400" cy="13" r="3.400" fill="#3f9d38" stroke="#2f8a2c" stroke-width=".6"/><path d="M10.400 13H14.400M12.400 11V15" stroke="#fff" stroke-width="1.400"/></svg>
<svg class="abs" style="left:81px;top:82px;overflow:visible" width="16" height="16" viewBox="0 0 16 16"><path d="M3 4V14Q3 15.600 8 15.600Q13 15.600 13 14V4Q13 2.200 8 2.200Q3 2.200 3 4Z" fill="#a2a2a2"/><ellipse cx="8" cy="4" rx="4.400" ry="1.300" fill="#ababab"/></svg>
<svg class="abs" style="left:105px;top:82px;overflow:visible" width="16" height="16" viewBox="0 0 16 16"><path d="M8 1.500L12.300 7H10V15.500H6V7H3.700Z" fill="#a4a4a4"/></svg>
<svg class="abs" style="left:129px;top:82px;overflow:visible" width="16" height="16" viewBox="0 0 16 16"><path d="M8 15.500L12.300 10H10V1.500H6V10H3.700Z" fill="#a4a4a4"/></svg>
<svg class="abs" style="left:153px;top:82px;overflow:visible" width="16" height="16" viewBox="0 0 16 16"><path d="M1.800 8.500Q2 3.500 8 3.600H10.500" fill="none" stroke="#5cb860" stroke-width="3"/><path d="M9.500 .2L15.800 3.800L9.500 7.600Z" fill="#5cb860"/><path d="M14.200 8.500Q14 13.500 8 13.400H5.500" fill="none" stroke="#5cb860" stroke-width="3"/><path d="M6.500 16.800L.2 13.200L6.500 9.400Z" fill="#5cb860"/><path d="M3.500 6Q5 4.500 8 4.500M12.500 11Q11 12.500 8 12.500" fill="none" stroke="#9ad89a" stroke-width=".9"/></svg>
<svg class="abs" style="left:177px;top:82px;overflow:visible" width="16" height="16" viewBox="0 0 16 16"><text x="-.3" y="7.800" font-family="Liberation Serif,serif" font-weight="bold" font-size="10.500" fill="#484848">A</text><text x=".4" y="16.800" font-family="Liberation Serif,serif" font-weight="bold" font-size="10.500" fill="#484848">Z</text><path d="M13.500 2V14" stroke="#6aa4f0" stroke-width="1"/><path d="M12 12.500L13.500 15.300L15 12.500Z" fill="#5a9aee"/></svg>
<svg class="abs" style="left:201px;top:82px;overflow:visible" width="16" height="16" viewBox="0 0 16 16"><circle cx="6.500" cy="6.300" r="5.200" fill="#eef4fb" stroke="#e2a468" stroke-width="1.700"/><circle cx="6.500" cy="6.300" r="3.800" fill="none" stroke="#dce8f6" stroke-width="1"/><path d="M11 11L13.800 14" stroke="#d88e48" stroke-width="3.400" stroke-linecap="round"/></svg>
<svg class="abs" style="left:225px;top:82px;overflow:visible" width="16" height="16" viewBox="0 0 16 16"><linearGradient id="gmin" x1="0" y1="0" x2="0" y2="1"><stop offset="0" stop-color="#ffffff"/><stop offset="1" stop-color="#e8e8e8"/></linearGradient><circle cx="8.300" cy="8.700" r="6.600" fill="url(#gmin)" stroke="#d4d4d4" stroke-width="1.200"/><rect x="5.300" y="7.500" width="6" height="2.600" rx="1.200" fill="#666"/></svg>
<div class="abs" style="left:0;top:795px;width:1534px;height:26px;border:1px solid #b4b4b4;border-left:none"></div>
<div class="abs" style="left:0;top:821px;width:1536px;height:2px;background:#e2e2e2"></div>
<div class="abs" style="left:0;top:823px;width:1536px;height:3px;background:#161616"></div>
<div class="abs" style="left:52px;top:824px;width:47px;height:2px;background:#343434"></div>
<div class="abs" style="left:102px;top:824px;width:47px;height:2px;background:#343434"></div>
<div class="abs" style="left:151px;top:824px;width:47px;height:2px;background:#343434"></div>
<div class="abs" style="left:200px;top:824px;width:47px;height:2px;background:#343434"></div>
<div class="abs" style="left:250px;top:824px;width:47px;height:2px;background:#343434"></div>
<div class="abs" style="left:300px;top:824px;width:47px;height:2px;background:#343434"></div>
<div class="abs" style="left:349px;top:824px;width:47px;height:2px;background:#343434"></div>
<div class="abs" style="left:398px;top:824px;width:47px;height:2px;background:#343434"></div>
<div class="abs" style="left:448px;top:824px;width:47px;height:2px;background:#343434"></div>
<div class="abs" style="left:498px;top:824px;width:47px;height:2px;background:#c4c4c4"></div>
<div class="abs" style="left:547px;top:824px;width:47px;height:2px;background:#343434"></div>
<div class="abs" style="left:293px;top:796px;width:1px;height:24px;background:#b0b0b0"></div>
<div class="abs" style="left:294px;top:796px;width:1px;height:24px;background:#f8f8f8"></div>
<div class="abs" style="left:665px;top:796px;width:1px;height:24px;background:#b0b0b0"></div>
<div class="abs" style="left:666px;top:796px;width:1px;height:24px;background:#f8f8f8"></div>
<div class="abs" style="left:937px;top:796px;width:1px;height:24px;background:#b0b0b0"></div>
<div class="abs" style="left:938px;top:796px;width:1px;height:24px;background:#f8f8f8"></div>
<div class="abs" style="left:1233px;top:796px;width:1px;height:24px;background:#b0b0b0"></div>
<div class="abs" style="left:1234px;top:796px;width:1px;height:24px;background:#f8f8f8"></div>
<div class="abs" style="left:1382px;top:796px;width:1px;height:24px;background:#b0b0b0"></div>
<div class="abs" style="left:1383px;top:796px;width:1px;height:24px;background:#f8f8f8"></div>
<div class="abs" style="left:1511px;top:796px;width:1px;height:24px;background:#b0b0b0"></div>
<div class="abs" style="left:1512px;top:796px;width:1px;height:24px;background:#f8f8f8"></div>
<div class="t" style="left:6px;top:802px;letter-spacing:-0.039px;letter-spacing:-0.15px;">Active Data Sources: 1</div>
<div class="t" style="left:1063px;top:802px;letter-spacing:-0.15px;">JDK16.0.</div>
<div class="t" style="left:1239px;top:802px;letter-spacing:-0.15px;">not authorized</div>
<div class="t" style="left:1421px;top:803px;font-size:10px;letter-spacing:-0.4px;color:#6f8fd0">56M b/83M b</div>
<div class="abs" style="left:1383px;top:796px;width:86px;height:24px;background:#6b96cc;overflow:hidden"><div class="t" style="left:38px;top:7px;font-size:10px;letter-spacing:-0.4px;color:#d0dcf0">56M b/83M b</div></div>
<svg class="abs" style="left:1517px;top:801px" width="12" height="15"><path d="M1.500 3.500V12.500A4.500 1.500 0 0 0 10.500 12.500V3.500" fill="#e6e6e6" stroke="#8e8e8e" stroke-width="1"/><ellipse cx="6" cy="3.500" rx="4.500" ry="1.600" fill="#f4f4f4" stroke="#8e8e8e" stroke-width="1"/><path d="M4 6V12M8 6V12" stroke="#c2c2c2" stroke-width=".8"/></svg>
<div class="abs" style="left:540px;top:183px;width:518px;height:622px;background:#f0f0f0;border:1px solid #8a8a8a;box-shadow:0 0 3px rgba(0,0,0,.25)"></div>
<div class="abs" style="left:541px;top:184px;width:516px;height:30px;background:#fff"></div>
<svg class="abs" style="left:550px;top:192px" width="12" height="12"><rect x="0" y="0" width="5" height="5" fill="#f0000a"/><rect x="6" y="0" width="6" height="5" fill="#f0000a"/><rect x="0" y="6" width="5" height="6" fill="#f0000a"/></svg>
<div class="t" style="left:568.5px;top:193px;color:#111;letter-spacing:-0.4px">Execute</div>
<svg class="abs" style="left:1035px;top:193px" width="11" height="11" stroke="#222" stroke-width="1.1" fill="none"><path d="M0.500 0.500L10 10M10 0.500L0.500 10"/></svg>
<div class="abs" style="left:551px;top:223px;width:495px;height:569px;border:1px solid #c0c0c0"></div>
<div class="t" style="left:558px;top:241px;letter-spacing:-0.12px">Connection</div>
<div class="abs" style="left:627px;top:235px;width:404px;height:23px;border:1px solid #8e8e8e;border-bottom:2px solid #8a8a8a;background:linear-gradient(#fafafa,#eeeeee 60%,#dcdcdc)"></div>
<div class="t" style="left:632px;top:241px;color:#000">employee</div>
<svg class="abs" style="left:1017px;top:244px" width="8" height="5" viewBox="0 0 9 5.500" preserveAspectRatio="none"><path d="M0 0H9V1.300H0ZM1.500 1.300H7.500L4.500 5.200Z" fill="#111"/></svg>
<div class="t" style="left:561px;top:276px;letter-spacing:-0.2px">Object Type:</div>
<div class="abs" style="left:640px;top:269px;width:396px;height:23px;border:1px solid #9e9e9e;border-right:2px solid #b0b0b0;border-bottom:2px solid #b0b0b0;background:#f0f0f0"></div>
<div class="t g" style="left:645px;top:276px;">Procedure</div>
<svg class="abs" style="left:1022px;top:278px" width="8" height="5" viewBox="0 0 9 5.500" preserveAspectRatio="none"><path d="M0 0H9V1.300H0ZM1.500 1.300H7.500L4.500 5.200Z" fill="#b0b0b0"/></svg>
<div class="t" style="left:561px;top:305px;letter-spacing:-0.2px">Object Name:</div>
<div class="abs" style="left:640px;top:298px;width:396px;height:23px;border:1px solid #9e9e9e;border-right:2px solid #b0b0b0;border-bottom:2px solid #b0b0b0;background:#f0f0f0"></div>
<div class="t g" style="left:645px;top:305px;letter-spacing:-0.479px;">ALL_LANGS</div>
<svg class="abs" style="left:1022px;top:307px" width="8" height="5" viewBox="0 0 9 5.500" preserveAspectRatio="none"><path d="M0 0H9V1.300H0ZM1.500 1.300H7.500L4.500 5.200Z" fill="#b0b0b0"/></svg>
<div class="abs" style="left:561px;top:328px;width:474px;height:156px;border:1px solid #9a9a9a;background:#f0f0f0"></div>
<div class="hdr" style="left:562px;top:329px;width:157px;height:24px;line-height:28px;padding-left:2px;">Parameter</div>
<div class="hdr" style="left:719px;top:329px;width:158px;height:24px;line-height:28px;padding-left:2px;">Data Type</div>
<div class="hdr" style="left:877px;top:329px;width:157px;height:24px;line-height:28px;padding-left:2px;letter-spacing:-0.175px;">Mode</div>
<div class="abs" style="left:562px;top:353px;width:472px;height:96px;background:#fff"></div>
<div class="abs" style="left:562px;top:376px;width:472px;height:1px;background:#c6c6c6"></div>
<div class="abs" style="left:562px;top:400px;width:472px;height:1px;background:#c6c6c6"></div>
<div class="abs" style="left:562px;top:424px;width:472px;height:1px;background:#c6c6c6"></div>
<div class="abs" style="left:562px;top:448px;width:472px;height:1px;background:#c6c6c6"></div>
<div class="abs" style="left:718px;top:353px;width:1px;height:96px;background:#c0c0c0"></div>
<div class="abs" style="left:876px;top:353px;width:1px;height:96px;background:#c0c0c0"></div>
<div class="abs" style="left:1033px;top:353px;width:1px;height:96px;background:#c0c0c0"></div>
<div class="t" style="left:563px;top:359px;">CODE</div>
<div class="t" style="left:720px;top:359px;letter-spacing:-0.170px;">VARCHAR(5)</div>
<div class="t" style="left:878px;top:359px;letter-spacing:-0.133px;">OUT</div>
<div class="t" style="left:563px;top:383px;letter-spacing:-0.254px;">GRADE</div>
<div class="t" style="left:720px;top:383px;letter-spacing:-0.170px;">VARCHAR(5)</div>
<div class="t" style="left:878px;top:383px;letter-spacing:-0.133px;">OUT</div>
<div class="t" style="left:563px;top:407px;letter-spacing:-0.171px;">COUNTRY</div>
<div class="t" style="left:720px;top:407px;letter-spacing:-0.155px;">VARCHAR(15)</div>
<div class="t" style="left:878px;top:407px;letter-spacing:-0.133px;">OUT</div>
<div class="t" style="left:563px;top:431px;letter-spacing:-0.530px;">LANG</div>
<div class="t" style="left:720px;top:431px;letter-spacing:-0.155px;">VARCHAR(15)</div>
<div class="t" style="left:878px;top:431px;letter-spacing:-0.133px;">OUT</div>
<div class="abs" style="left:562px;top:490px;width:472px;height:218px;border:1px solid #9a9a9a;border-top:2px solid #9c9c9c;background:#cbcbcb"></div>
<div class="hdr" style="left:563px;top:492px;width:120px;height:24px;line-height:24px;border-bottom:2px solid #a6a6a6;padding-left:2px;">CODE</div>
<div class="hdr" style="left:683px;top:492px;width:120px;height:24px;line-height:24px;border-bottom:2px solid #a6a6a6;padding-left:2px;letter-spacing:-0.254px;">GRADE</div>
<div class="hdr" style="left:803px;top:492px;width:120px;height:24px;line-height:24px;border-bottom:2px solid #a6a6a6;padding-left:2px;letter-spacing:-0.171px;">COUNTRY</div>
<div class="hdr" style="left:923px;top:492px;width:110px;height:24px;line-height:24px;border-bottom:2px solid #a6a6a6;padding-left:12px;letter-spacing:-0.530px;">LANG</div>
<div class="abs" style="left:563px;top:516px;width:470px;height:22px;background:#fff"></div>
<div class="abs" style="left:923px;top:516px;width:110px;height:22px;background:#abbaf3"></div>
<div class="abs" style="left:563px;top:538px;width:470px;height:1px;background:#bcbcbc"></div>
<div class="abs" style="left:682px;top:516px;width:1px;height:23px;background:#c0c0c0"></div>
<div class="abs" style="left:802px;top:516px;width:1px;height:23px;background:#c0c0c0"></div>
<div class="abs" style="left:922px;top:516px;width:1px;height:23px;background:#c0c0c0"></div>
<div class="t" style="left:565px;top:521px;">CEO</div>
<div class="t" style="left:685px;top:521px;">1</div>
<div class="t" style="left:805px;top:521px;letter-spacing:-0.350px;">USA</div>
<div class="t" style="left:928px;top:521px;width:110px;text-align:center;letter-spacing:-0.307px;">&lt;NULL&gt;</div>
<div class="abs" style="left:563px;top:692px;width:470px;height:15px;background:#f0f0f0"></div>
<div class="abs" style="left:563px;top:692px;width:16px;height:15px;background:linear-gradient(90deg,#fff,#e4e4e4);border:1px solid #b0b0b0"></div>
<svg class="abs" style="left:567px;top:696px" width="5" height="7" viewBox="0 0 6 9" preserveAspectRatio="none"><path d="M6 0V9H4.500V0ZM4.500 1V8L.5 4.500Z" fill="#111"/></svg>
<div class="abs" style="left:579px;top:692px;width:429px;height:15px;background:linear-gradient(#88aadd,#6a93d0);border:1px solid #5f86c4"></div>
<svg class="abs" style="left:790px;top:696px" width="8" height="7"><path d="M0.500 0V7M3.500 0V7M6.500 0V7" stroke="#aab6ec" stroke-width="1"/></svg>
<div class="abs" style="left:1017px;top:692px;width:16px;height:15px;background:linear-gradient(90deg,#fff,#e4e4e4);border:1px solid #b0b0b0"></div>
<svg class="abs" style="left:1023px;top:696px" width="5" height="7" viewBox="0 0 6 9" preserveAspectRatio="none"><path d="M0 0V9H1.500V0ZM1.500 1V8L5.500 4.500Z" fill="#111"/></svg>
<div class="abs" style="left:561px;top:708px;width:84px;height:26px;background:#c8c8c8;border:1px solid #8c8c8c;border-top:none;border-radius:0 0 3px 3px"></div>
<div class="abs" style="left:567px;top:715px;width:14px;height:12px;background:#555;border:1px solid #5a7fb8;border-top:2px solid #6f95cf"></div>
<div class="t" style="left:585px;top:715px">Output</div>
<svg class="abs" style="left:632px;top:717px" width="7" height="7" stroke="#444" stroke-width="1" fill="none"><path d="M0.500 0.500L6 6M6 0.500L0.500 6"/></svg>
<div class="abs" style="left:645px;top:708px;width:113px;height:25px;background:#f0f0f0;border:1px solid #8c8c8c;border-top:none;border-radius:0 0 3px 3px"></div>
<svg class="abs" style="left:651px;top:714px" width="15" height="12"><rect x="0.500" y="0.500" width="14" height="11" fill="#fff" stroke="#5a86c8"/><rect x="1" y="1" width="13" height="2" fill="#7aa3e0"/><path d="M1 5.500H14M1 8.500H14M5 3V11M10 3V11" stroke="#c8c8c8" stroke-width="1"/></svg>
<div class="t" style="left:670px;top:715px;letter-spacing:-0.2px">Result Set 1</div>
<svg class="abs" style="left:745px;top:717px" width="7" height="7" stroke="#444" stroke-width="1" fill="none"><path d="M0.500 0.500L6 6M6 0.500L0.500 6"/></svg>
<div class="btn" style="left:947px;top:740px;width:89px;height:29px;border-color:#7a7a7a;line-height:28px;box-shadow:inset 0 0 0 2px #9dbbe8">Execute</div>
</body></html>
